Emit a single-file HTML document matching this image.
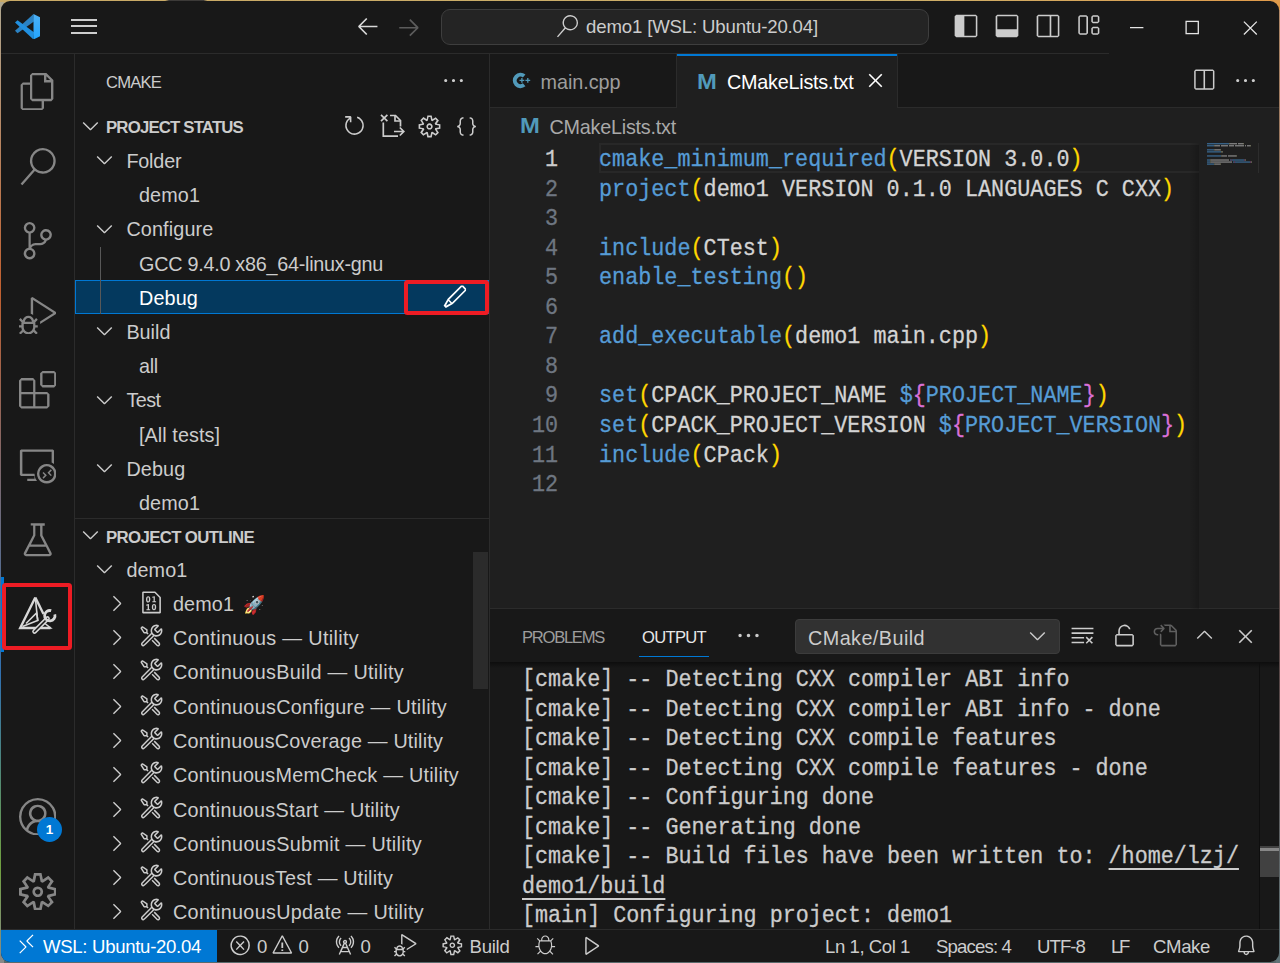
<!DOCTYPE html>
<html lang="en"><head><meta charset="utf-8"><title>demo1 [WSL: Ubuntu-20.04] - Visual Studio Code</title>
<style>
html,body{margin:0;padding:0}
body{width:1280px;height:963px;overflow:hidden;position:relative;background:#6b6a5c;font-family:"Liberation Sans", "DejaVu Sans", sans-serif;}
#desk{position:absolute;left:0;top:0;width:1280px;height:963px;background:linear-gradient(90deg,#c9aa66 0%,#c9aa66 12.9%,#3c3a38 13.2%,#3c3a38 15.9%,#c9aa66 16.2%,#cdb06a 70%,#d8a458 88%,#e09a4a 100%);}
#deskb{position:absolute;left:0;top:955px;width:1280px;height:8px;background:#5a6a6c}
#deskl{position:absolute;left:0;top:2px;width:4px;height:961px;background:linear-gradient(180deg,#b0a890,#c06030 30%,#3070b0 70%,#70a040 90%,#888)}
#deskr{position:absolute;left:1276px;top:10px;width:4px;height:953px;background:linear-gradient(180deg,#b08868,#705850 40%,#584848 70%,#607478)}
#win{position:absolute;left:1px;top:1px;width:1278px;height:960.9px;border-radius:9px;background:#181818;overflow:hidden;}
#o{position:absolute;left:-1px;top:-1px;width:1280px;height:963px}
.t{position:absolute;white-space:pre;}
.i{position:absolute;display:block}
.b{position:absolute;box-sizing:border-box}
.c{position:absolute;white-space:pre;font-family:"Liberation Mono", "DejaVu Sans Mono", monospace;transform-origin:0 50%;-webkit-text-stroke:0.3px}
</style></head>
<body>
<div id="desk"></div><div id="deskb"></div><div id="deskl"></div><div id="deskr"></div>
<div id="win"><div id="o">
<div class="b" style="left:490px;top:108px;width:790px;height:501px;background:#1f1f1f"></div>
<div class="b" style="left:1px;top:53px;width:1108px;height:1px;background:#2b2b2b"></div>
<div class="b" style="left:74px;top:54px;width:1px;height:875px;background:#2b2b2b"></div>
<div class="b" style="left:489px;top:54px;width:1px;height:875px;background:#2b2b2b"></div>
<div class="b" style="left:490px;top:107px;width:790px;height:1px;background:#2b2b2b"></div>
<div class="b" style="left:490px;top:608px;width:790px;height:1px;background:#2b2b2b"></div>
<div class="b" style="left:490px;top:609px;width:790px;height:320px;background:#181818"></div>
<div class="b" style="left:1px;top:929px;width:1279px;height:1px;background:#2b2b2b"></div>
<div class="b" style="left:1px;top:930px;width:216px;height:34px;background:#0078d4"></div>
<svg class="i" style="left:14.9px;top:13.7px" width="25.4" height="25.6" viewBox="0 0 100 100">
<defs><linearGradient id="lg1" x1="0" y1="0" x2="0" y2="1"><stop offset="0" stop-color="#4db0f5"/><stop offset="1" stop-color="#22a5ff"/></linearGradient></defs>
<polygon points="72.9,0 74.5,29 10,75.6 0,65.8" fill="#2b82c3"/>
<polygon points="72.9,100 74.5,71 10,24.4 0,33.3" fill="#2190e0"/>
<polygon points="72.9,0 100,13 100,86 72.9,100" fill="url(#lg1)"/>
</svg>
<div class="b" style="left:71px;top:19px;width:26.3px;height:2px;background:#cdcdcd"></div>
<div class="b" style="left:71px;top:25.2px;width:26.3px;height:2px;background:#cdcdcd"></div>
<div class="b" style="left:71px;top:31.7px;width:26.3px;height:2px;background:#cdcdcd"></div>
<svg class="i" style="left:354.7px;top:13.4px;" width="25.6" height="25.6" viewBox="0 0 16 16"><path fill="#d8d8d8" d="M6.99 3.09 2.03 8.11V8.8L6.99 13.81L7.73 13.07L3.57 8.96H14.03V7.95H3.57L7.73 3.79Z"/></svg>
<svg class="i" style="left:396px;top:13.5px;" width="25.6" height="25.6" viewBox="0 0 16 16"><path fill="#5c5c5c" d="M9.01 13.87 14.03 8.91V8.16L9.01 3.2L8.27 3.89L12.43 8.05H2.03V9.01H12.43L8.27 13.17Z"/></svg>
<div class="b" style="left:441px;top:9px;width:488px;height:36px;background:#242424;border:1px solid #3e3e3e;border-radius:9px"></div>
<svg class="i" style="left:556.1px;top:15px;" width="22.5" height="22.5" viewBox="0 0 16 16"><path fill="#cccccc" d="M10.19 0Q8.53 0 7.17 0.88Q5.81 1.76 5.15 3.25Q4.48 4.75 4.72 6.35Q4.96 7.95 6.03 9.12L0.69 15.25L1.44 15.89L6.77 9.81Q8.21 10.93 10 10.99Q11.79 11.04 13.28 10.03Q14.77 9.01 15.36 7.31Q15.95 5.6 15.41 3.87Q14.88 2.13 13.41 1.07Q11.95 0 10.19 0ZM10.19 9.97Q8.96 9.97 7.92 9.39Q6.88 8.8 6.27 7.76Q5.65 6.72 5.65 5.49Q5.65 4.27 6.27 3.23Q6.88 2.19 7.92 1.6Q8.96 1.01 10.19 1.01Q11.41 1.01 12.43 1.6Q13.44 2.19 14.05 3.23Q14.67 4.27 14.67 5.49Q14.67 6.72 14.05 7.76Q13.44 8.8 12.43 9.41Q11.41 10.03 10.19 10.03Z"/></svg>
<span class="t" style="left:586px;top:14.0px;line-height:26px;font-size:18.6px;color:#cccccc;letter-spacing:-0.146px;">demo1 [WSL: Ubuntu-20.04]</span>
<svg class="i" style="left:953px;top:12.6px;" width="26" height="26" viewBox="0 0 16 16"><path fill="#cccccc" d="M2.03 1.01 1.01 1.97V13.97L2.03 14.99H14.03L14.99 13.97V1.97L14.03 1.01ZM14.03 13.97H6.99V1.97H14.03Z"/></svg>
<svg class="i" style="left:993.8px;top:12.8px;" width="26" height="26" viewBox="0 0 16 16"><path fill="#cccccc" d="M2.03 1.01 1.01 1.97V13.97L2.03 14.99H14.03L14.99 13.97V1.97L14.03 1.01ZM2.03 9.97V1.97H14.03V9.97Z"/></svg>
<svg class="i" style="left:1034.5px;top:12.8px;" width="26" height="26" viewBox="0 0 16 16"><path fill="#cccccc" d="M2.03 1.01 1.01 2.03V14.03L2.03 14.99H14.03L14.99 14.03V2.03L14.03 1.01ZM2.03 14.03V2.03H9.01V14.03ZM10.03 14.03V2.03H14.03V14.03Z"/></svg>
<svg class="i" style="left:1074.5px;top:11.8px;" width="26" height="26" viewBox="0 0 16 16"><path fill="#cccccc" d="M2.99 1.97 2.03 2.99V13.01L2.99 13.97H6.99L8 13.01V2.99L6.99 1.97ZM2.99 13.01V2.99H6.99V13.01ZM10.03 2.99 10.99 1.97H14.03L14.99 2.99V5.97L14.03 6.99H10.99L10.03 5.97ZM10.99 2.99V5.97H14.03V2.99ZM10.03 9.97 10.99 9.01H14.03L14.99 9.97V13.01L14.03 13.97H10.99L10.03 13.01ZM10.99 9.97V13.01H14.03V9.97Z"/></svg>
<svg class="i" style="left:1120px;top:10px" width="150" height="36" viewBox="0 0 150 36" fill="none" stroke="#e4e4e4" stroke-width="1.3"><path d="M10 17.6 H23.4"/><rect x="66.1" y="11.4" width="12.2" height="12.2"/><path d="M123.9 11.6 L136.8 24.5 M136.8 11.6 L123.9 24.5"/></svg>
<svg class="i" style="left:18.75px;top:72.75px;" width="37.5" height="37.5" viewBox="0 0 16 16"><path fill="#868686" d="M11.68 0H5.65L4.69 1.01V4H1.65L0.69 5.01V15.04L1.65 16H9.71L10.67 15.04V12H13.81L14.67 11.04V2.99ZM11.68 1.39 13.28 2.99H11.68ZM9.65 14.99H1.65V5.01H4.69V11.04L5.65 12H9.65ZM13.65 10.99H5.65V1.01H10.67V4H13.65Z"/></svg>
<svg class="i" style="left:18.75px;top:148.33px;" width="37.5" height="37.5" viewBox="0 0 16 16"><path fill="#868686" d="M10.19 0Q8.53 0 7.17 0.88Q5.81 1.76 5.15 3.25Q4.48 4.75 4.72 6.35Q4.96 7.95 6.03 9.12L0.69 15.25L1.44 15.89L6.77 9.81Q8.21 10.93 10 10.99Q11.79 11.04 13.28 10.03Q14.77 9.01 15.36 7.31Q15.95 5.6 15.41 3.87Q14.88 2.13 13.41 1.07Q11.95 0 10.19 0ZM10.19 9.97Q8.96 9.97 7.92 9.39Q6.88 8.8 6.27 7.76Q5.65 6.72 5.65 5.49Q5.65 4.27 6.27 3.23Q6.88 2.19 7.92 1.6Q8.96 1.01 10.19 1.01Q11.41 1.01 12.43 1.6Q13.44 2.19 14.05 3.23Q14.67 4.27 14.67 5.49Q14.67 6.72 14.05 7.76Q13.44 8.8 12.43 9.41Q11.41 10.03 10.19 10.03Z"/></svg>
<svg class="i" style="left:18.75px;top:222.11px;" width="37.5" height="37.5" viewBox="0 0 16 16"><path fill="#868686" d="M14.03 5.49Q14.03 4.8 13.65 4.19Q13.28 3.57 12.64 3.25Q12 2.93 11.31 2.99Q10.61 3.04 10.03 3.47Q9.44 3.89 9.2 4.56Q8.96 5.23 9.07 5.92Q9.17 6.61 9.65 7.12Q10.13 7.63 10.83 7.84Q10.56 8.37 10.08 8.67Q9.6 8.96 9.01 8.96H7.04Q5.87 8.96 5.01 9.76V4.91Q5.97 4.75 6.53 3.97Q7.09 3.2 7.01 2.24Q6.93 1.28 6.21 0.64Q5.49 0 4.53 0Q3.57 0 2.85 0.64Q2.13 1.28 2.05 2.24Q1.97 3.2 2.53 3.97Q3.09 4.75 4.05 4.91V10.99Q3.09 11.2 2.51 11.95Q1.92 12.69 2 13.65Q2.08 14.61 2.75 15.28Q3.41 15.95 4.37 16Q5.33 16.05 6.08 15.47Q6.83 14.88 6.99 13.92Q7.15 12.96 6.67 12.16Q6.19 11.36 5.23 11.09Q5.49 10.56 5.97 10.27Q6.45 9.97 7.04 9.97H9.01Q9.97 9.97 10.75 9.41Q11.52 8.85 11.84 7.95Q12.75 7.84 13.39 7.12Q14.03 6.4 14.03 5.49ZM3.04 2.51Q3.04 1.87 3.47 1.44Q3.89 1.01 4.53 1.01Q5.17 1.01 5.6 1.44Q6.03 1.87 6.03 2.48Q6.03 3.09 5.6 3.55Q5.17 4 4.53 4Q3.89 4 3.47 3.55Q3.04 3.09 3.04 2.51ZM6.03 13.44Q6.03 14.08 5.6 14.51Q5.17 14.93 4.53 14.93Q3.89 14.93 3.47 14.51Q3.04 14.08 3.04 13.47Q3.04 12.85 3.47 12.4Q3.89 11.95 4.53 11.95Q5.17 11.95 5.6 12.4Q6.03 12.85 6.03 13.44ZM11.52 6.99Q10.88 6.99 10.45 6.53Q10.03 6.08 10.03 5.47Q10.03 4.85 10.45 4.43Q10.88 4 11.49 4Q12.11 4 12.56 4.43Q13.01 4.85 13.01 5.47Q13.01 6.08 12.56 6.53Q12.11 6.99 11.52 6.99Z"/></svg>
<svg class="i" style="left:18.75px;top:296.79px;" width="37.5" height="37.5" viewBox="0 0 16 16"><path fill="#868686" d="M7.31 9.01 6.4 9.87Q6.19 9.07 5.52 8.53Q4.85 8 4 8Q3.15 8 2.48 8.53Q1.81 9.07 1.6 9.87L0.69 9.01L0 9.71L1.17 10.83L1.01 10.99V12H0V13.01H1.01V13.07Q1.07 13.55 1.28 14.03L0 15.31L0.69 16L1.81 14.88Q2.19 15.41 2.77 15.71Q3.36 16 4 16Q4.64 16 5.23 15.71Q5.81 15.41 6.19 14.88L7.31 16L8 15.31L6.72 13.97Q6.93 13.55 6.99 13.01V12.96H8V12H6.99V10.99L6.88 10.83L8 9.71ZM4 9.01Q4.64 9.01 5.07 9.44Q5.49 9.87 5.49 10.51H2.51Q2.51 9.87 2.93 9.44Q3.36 9.01 4 9.01ZM6.03 13.01Q5.92 13.81 5.36 14.37Q4.8 14.93 4 14.99Q3.2 14.93 2.64 14.37Q2.08 13.81 2.03 13.01V11.52H6.03ZM15.84 6.4V7.25L9.01 11.57V10.4L14.67 6.83L6.03 1.33V7.63Q5.55 7.31 5.01 7.15V0.43L5.76 0Z"/></svg>
<svg class="i" style="left:18.75px;top:371.47px;" width="37.5" height="37.5" viewBox="0 0 16 16"><path fill="#868686" d="M9.01 1.01 10.03 0H14.99L16 1.01V5.97L14.99 6.99H10.03L9.01 5.97ZM10.03 1.01V5.97H14.99V1.01ZM0 9.97V4L1.01 2.99H6.03L6.99 4V9.01H12L13.01 9.97V14.99L12 16H1.01L0 14.99ZM6.03 9.01V4H1.01V9.01ZM6.03 9.97H1.01V14.99H6.03ZM6.99 14.99H12V9.97H6.99Z"/></svg>
<svg class="i" style="left:18.75px;top:446.15000000000003px;" width="37.5" height="37.5" viewBox="0 0 16 16"><path fill="#868686" d="M0.91 1.44H14.45L14.93 1.92V7.68Q14.45 7.31 13.92 7.04V2.45H1.44V11.84H6.61Q6.61 13.55 7.68 14.93H3.52V13.92H6.61V12.85H0.91L0.37 12.37V1.92ZM11.84 7.68Q10.72 7.68 9.76 8.24Q8.8 8.8 8.24 9.76Q7.68 10.72 7.68 11.84Q7.68 12.96 8.24 13.92Q8.8 14.88 9.76 15.44Q10.72 16 11.84 16Q12.96 16 13.92 15.44Q14.88 14.88 15.44 13.92Q16 12.96 16 11.84Q16 10.72 15.44 9.76Q14.88 8.8 13.92 8.24Q12.96 7.68 11.84 7.68ZM11.84 14.93Q10.99 14.93 10.27 14.53Q9.55 14.13 9.12 13.41Q8.69 12.69 8.69 11.84Q8.69 10.99 9.12 10.27Q9.55 9.55 10.27 9.12Q10.99 8.69 11.84 8.69Q12.69 8.69 13.41 9.12Q14.13 9.55 14.53 10.27Q14.93 10.99 14.93 11.84Q14.93 12.69 14.53 13.41Q14.13 14.13 13.41 14.53Q12.69 14.93 11.84 14.93ZM13.55 12.85 12.16 11.41 13.55 9.97 14.03 10.45 13.01 11.41 14.03 12.43ZM10.03 11.52 10.99 12.48 10.03 13.49 10.45 13.92 11.89 12.48 10.45 11.04Z"/></svg>
<svg class="i" style="left:18.75px;top:520.83px;" width="37.5" height="37.5" viewBox="0 0 16 16"><path fill="#868686" d="M13.87 13.55 10.03 6.03V2.03H10.99V1.01H5.01V1.97H6.03V5.97L2.08 13.55Q1.87 14.08 2.16 14.53Q2.45 14.99 2.99 14.99H13.01Q13.55 14.99 13.84 14.53Q14.13 14.08 13.87 13.55ZM6.88 6.4 6.99 6.19V2.03H9.01V6.24L10.93 10.03H5.07ZM2.99 14.03 4.53 10.99H11.47L13.01 14.03Z"/></svg>
<svg class="i" style="left:18.75px;top:797.75px;" width="37.5" height="37.5" viewBox="0 0 16 16"><path fill="#868686" d="M16 8Q16 5.81 14.93 3.97Q13.87 2.13 12.03 1.07Q10.19 0 8 0Q5.81 0 3.97 1.07Q2.13 2.13 1.07 3.97Q0 5.81 0 8Q0 9.76 0.75 11.36Q1.49 12.96 2.83 14.08L3.52 14.61Q5.55 16 8 16Q10.45 16 12.48 14.61L13.23 14.08Q14.51 12.96 15.25 11.36Q16 9.76 16 8ZM8 14.99Q5.81 14.99 4 13.71L4.05 13.33Q4.21 12.8 4.48 12.35Q4.75 11.89 5.12 11.52Q5.49 11.15 5.92 10.88Q6.35 10.61 6.91 10.48Q7.47 10.35 8 10.35Q8.8 10.35 9.57 10.64Q10.35 10.93 10.91 11.49Q11.47 12.05 11.79 12.8Q11.95 13.23 12.05 13.71Q10.24 14.99 8 14.99ZM5.55 7.57Q5.33 7.09 5.33 6.56Q5.33 6.03 5.55 5.55Q5.76 5.07 6.11 4.72Q6.45 4.37 6.93 4.13Q7.41 3.89 8 3.89Q8.59 3.89 9.04 4.11Q9.49 4.32 9.87 4.69Q10.24 5.07 10.45 5.55Q10.67 6.03 10.67 6.59Q10.67 7.15 10.45 7.6Q10.24 8.05 9.87 8.43Q9.49 8.8 9.01 9.01Q8 9.44 6.93 9.01Q6.51 8.8 6.13 8.43Q5.76 8.05 5.55 7.57ZM12.96 12.91Q12.96 12.91 12.96 12.85V12.8Q12.75 12.05 12.29 11.41Q11.84 10.77 11.2 10.29Q10.72 9.92 10.13 9.65Q10.4 9.49 10.61 9.28Q10.99 8.91 11.25 8.48Q11.79 7.63 11.73 6.56Q11.79 5.81 11.49 5.12Q11.2 4.43 10.67 3.89Q10.13 3.36 9.44 3.09Q8.75 2.83 7.97 2.83Q7.2 2.83 6.51 3.09Q5.81 3.36 5.31 3.89Q4.8 4.43 4.51 5.12Q4.21 5.81 4.21 6.56Q4.21 7.09 4.37 7.6Q4.53 8.11 4.75 8.48Q4.96 8.85 5.39 9.28Q5.6 9.49 5.87 9.71Q5.33 9.92 4.85 10.29Q4.21 10.77 3.76 11.41Q3.31 12.05 3.04 12.85V12.91Q2.08 11.95 1.55 10.67Q1.01 9.39 1.01 8Q1.01 6.08 1.95 4.48Q2.88 2.88 4.48 1.95Q6.08 1.01 8 1.01Q9.92 1.01 11.52 1.95Q13.12 2.88 14.05 4.48Q14.99 6.08 14.99 8Q14.99 9.39 14.48 10.67Q13.97 11.95 12.96 12.91Z"/></svg>
<svg class="i" style="left:18.75px;top:872.75px;" width="37.5" height="37.5" viewBox="0 0 16 16"><path fill="#868686" d="M13.23 5.81 16 6.4V9.6L13.23 10.19L14.83 12.53L12.53 14.77L10.19 13.23L9.6 16H6.4L5.81 13.23L3.47 14.83L1.23 12.53L2.77 10.19L0 9.6V6.4L2.77 5.81L1.23 3.47L3.47 1.17L5.81 2.77L6.4 0H9.6L10.19 2.77L12.53 1.17L14.83 3.47ZM12.21 9.23 14.88 8.69V7.36L12.21 6.77L11.84 5.92L13.33 3.63L12.43 2.67L10.13 4.21L9.23 3.84L8.69 1.17H7.36L6.83 3.84L5.97 4.21L3.68 2.67L2.72 3.63L4.27 5.92L3.89 6.77L1.23 7.36V8.69L3.89 9.23L4.27 10.08L2.72 12.37L3.68 13.33L5.97 11.79L6.83 12.16L7.36 14.83H8.69L9.23 12.16L10.13 11.79L12.43 13.33L13.33 12.37L11.84 10.08ZM6.72 6.08Q7.31 5.71 8 5.71Q8.96 5.71 9.63 6.37Q10.29 7.04 10.29 8Q10.29 8.8 9.76 9.44Q9.23 10.08 8.43 10.24Q7.63 10.4 6.91 10.03Q6.19 9.65 5.89 8.88Q5.6 8.11 5.81 7.33Q6.03 6.56 6.72 6.08ZM7.36 8.96Q7.68 9.12 8 9.12Q8.48 9.12 8.8 8.8Q9.12 8.48 9.12 8.03Q9.12 7.57 8.88 7.28Q8.64 6.99 8.24 6.91Q7.84 6.83 7.47 7.01Q7.09 7.2 6.93 7.57Q6.77 7.95 6.91 8.35Q7.04 8.75 7.36 8.96Z"/></svg>
<div class="b" style="left:37px;top:817.3px;width:25px;height:25px;background:#0078d4;border-radius:50%"></div>
<span class="t" style="left:45.7px;top:820.4px;line-height:19px;font-size:13.5px;color:#ffffff;font-weight:700;">1</span>
<div class="b" style="left:1px;top:577px;width:3px;height:74.7px;background:#0078d4"></div>
<svg class="i" style="left:14px;top:590px" width="48" height="48" viewBox="0 0 48 48" fill="none" stroke="#d7d7d7" stroke-width="2.4" stroke-linejoin="miter">
<path d="M21.3 7.5 L6.2 38 L36.5 38"/>
<path d="M21.3 7.5 L29.5 24"/>
<path d="M21.5 9 L23.6 30.5 L8.5 36.5" stroke-width="1.6"/>
<path d="M12 33.5 L22.6 23 L24 31" stroke-width="1.6"/>
<path d="M31 33.5 L36.5 38 L29 38" stroke-width="1.6"/>
<path d="M20.5 41.5 L33.5 28.5" stroke-width="4.6" stroke-linecap="round"/>
<path d="M20.5 41.5 L33.5 28.5" stroke="#181818" stroke-width="1.6" stroke-linecap="round"/>
<path d="M40.8 24.3 A5.2 5.2 0 1 1 37.2 20.7" stroke-width="2.8"/>
</svg>
<div class="b" style="left:1.5px;top:583.1px;width:70.8px;height:67.1px;border:4.2px solid #ed1c24;border-radius:3.5px"></div>
<span class="t" style="left:106px;top:70.5px;line-height:23px;font-size:16.6px;color:#cccccc;letter-spacing:-0.803px;">CMAKE</span>
<svg class="i" style="left:440.5px;top:68px;" width="25" height="25" viewBox="0 0 16 16"><path fill="#cccccc" d="M4 8Q4 8.43 3.71 8.72Q3.41 9.01 2.99 9.01Q2.56 9.01 2.29 8.72Q2.03 8.43 2.03 8Q2.03 7.57 2.29 7.28Q2.56 6.99 2.99 6.99Q3.41 6.99 3.71 7.28Q4 7.57 4 8ZM9.01 8Q9.01 8.43 8.72 8.72Q8.43 9.01 8 9.01Q7.57 9.01 7.28 8.72Q6.99 8.43 6.99 8Q6.99 7.57 7.28 7.28Q7.57 6.99 8 6.99Q8.43 6.99 8.72 7.28Q9.01 7.57 9.01 8ZM14.03 8Q14.03 8.43 13.73 8.72Q13.44 9.01 13.01 9.01Q12.59 9.01 12.29 8.72Q12 8.43 12 8Q12 7.57 12.29 7.28Q12.59 6.99 13.01 6.99Q13.44 6.99 13.73 7.28Q14.03 7.57 14.03 8Z"/></svg>
<svg class="i" style="left:78px;top:112.5px;" width="25" height="25" viewBox="0 0 16 16"><path fill="#cccccc" d="M8 10.08 12.32 5.71 12.96 6.35 8.27 10.99H7.68L2.99 6.35L3.63 5.71Z"/></svg>
<span class="t" style="left:106px;top:115.5px;line-height:24px;font-size:16.8px;color:#cccccc;font-weight:700;letter-spacing:-0.826px;">PROJECT STATUS</span>
<svg class="i" style="left:342.2px;top:112.6px;" width="25" height="25" viewBox="0 0 16 16"><path fill="#cccccc" d="M4.69 2.99H2.03V1.97H5.49L6.03 2.51V5.97H5.01V4Q3.63 5.01 3.17 6.69Q2.72 8.37 3.41 9.97Q4.11 11.57 5.63 12.4Q7.15 13.23 8.85 12.93Q10.56 12.64 11.71 11.36Q12.85 10.08 12.99 8.35Q13.12 6.61 12.16 5.2Q11.2 3.79 9.55 3.25L9.81 2.29Q11.15 2.72 12.13 3.65Q13.12 4.59 13.6 5.87Q14.08 7.15 13.97 8.51Q13.87 9.87 13.17 11.04Q12.48 12.21 11.33 12.99Q10.19 13.76 8.83 13.95Q7.47 14.13 6.16 13.71Q4.85 13.28 3.87 12.35Q2.88 11.41 2.4 10.13Q1.92 8.85 2.03 7.49Q2.13 6.13 2.83 4.96Q3.52 3.79 4.69 2.99Z"/></svg>
<svg class="i" style="left:417.1px;top:113.9px;" width="25" height="25" viewBox="0 0 16 16"><path fill="#cccccc" d="M9.12 4.37 8.59 1.97H7.41L6.88 4.37L6.19 4.69L4.21 3.41L3.31 4.21L4.59 6.19L4.43 6.88L2.03 7.41V8.59L4.43 9.12L4.69 9.92L3.41 11.89L4.21 12.69L6.19 11.41L6.99 11.68L7.41 13.97H8.59L9.12 11.57L9.92 11.31L11.89 12.59L12.69 11.79L11.41 9.81L11.68 9.01L14.03 8.59V7.41L11.63 6.88L11.31 6.08L12.59 4.11L11.79 3.31L9.81 4.59ZM9.39 1.01 9.92 3.41 12 2.08 14.03 4.11 12.59 6.19 14.99 6.61V9.39L12.59 9.92L14.03 12L12 13.97L9.92 12.59L9.39 14.99H6.61L6.08 12.59L4 13.92L2.03 11.89L3.41 9.81L1.01 9.39V6.61L3.41 6.08L2.08 4L4.11 1.97L6.19 3.41L6.61 1.01ZM10.03 8Q10.03 8.8 9.41 9.39Q8.8 9.97 8 9.97Q7.2 9.97 6.61 9.39Q6.03 8.8 6.03 8Q6.03 7.2 6.61 6.59Q7.2 5.97 8 5.97Q8.8 5.97 9.41 6.59Q10.03 7.2 10.03 8ZM8 9.01Q8.43 9.01 8.72 8.72Q9.01 8.43 9.01 8Q9.01 7.57 8.72 7.28Q8.43 6.99 8 6.99Q7.57 6.99 7.28 7.28Q6.99 7.57 6.99 8Q6.99 8.43 7.28 8.72Q7.57 9.01 8 9.01Z"/></svg>
<svg class="i" style="left:453.5px;top:114px;" width="25" height="25" viewBox="0 0 16 16"><path fill="#cccccc" d="M6.03 2.99V1.97H5.92Q5.44 1.97 4.99 2.16Q4.53 2.35 4.21 2.69Q3.89 3.04 3.73 3.47Q3.57 3.89 3.52 4.32Q3.47 4.75 3.52 5.17V6.03Q3.52 6.35 3.41 6.61Q3.2 7.15 2.67 7.41Q2.4 7.52 2.08 7.52H2.03V8.48H2.08Q2.4 8.48 2.67 8.59V8.64Q2.93 8.75 3.09 8.91V8.96Q3.31 9.12 3.41 9.39Q3.52 9.65 3.52 9.97V10.83Q3.47 11.25 3.52 11.68V11.73Q3.57 12.11 3.73 12.53Q3.89 12.96 4.24 13.31Q4.59 13.65 5.01 13.81Q5.44 13.97 5.92 14.03H6.03V13.01H5.92Q5.6 13.01 5.33 12.91Q5.07 12.8 4.88 12.59Q4.69 12.37 4.59 12.11Q4.48 11.84 4.48 11.52V10.19Q4.48 9.87 4.43 9.55Q4.37 9.23 4.27 8.96Q4 8.37 3.52 8Q4 7.63 4.27 7.04Q4.37 6.77 4.43 6.45Q4.48 6.13 4.48 5.81V4.48Q4.48 4 4.72 3.65Q4.96 3.31 5.33 3.09Q5.6 2.99 5.92 2.99ZM10.03 13.01V13.97H10.08Q10.56 13.97 10.99 13.81Q11.41 13.65 11.76 13.31Q12.11 12.96 12.27 12.53Q12.43 12.16 12.48 11.68Q12.53 11.25 12.48 10.83V9.97Q12.48 9.65 12.59 9.39Q12.8 8.85 13.33 8.59Q13.6 8.48 13.92 8.48H14.03V7.52H13.92Q13.6 7.52 13.33 7.41V7.36Q13.07 7.25 12.91 7.09V7.04Q12.69 6.88 12.59 6.61Q12.48 6.35 12.48 6.03V5.17Q12.53 4.75 12.48 4.32V4.27Q12.43 3.89 12.27 3.47Q12.11 3.04 11.76 2.69Q11.41 2.35 10.99 2.16Q10.56 1.97 10.08 2.03H10.03V2.99H10.08Q10.4 2.99 10.67 3.09Q10.93 3.2 11.12 3.41Q11.31 3.63 11.41 3.89Q11.52 4.16 11.52 4.48V5.81Q11.52 6.13 11.57 6.45Q11.63 6.77 11.73 7.04Q12 7.63 12.48 8Q12 8.37 11.73 8.96Q11.63 9.23 11.57 9.55Q11.52 9.87 11.52 10.19V11.52Q11.52 12 11.28 12.35Q11.04 12.69 10.67 12.91Q10.4 13.01 10.08 13.01Z"/></svg>
<svg class="i" style="left:377.8px;top:112.4px" width="28" height="28" viewBox="0 0 28 28" fill="none" stroke="#cccccc" stroke-width="1.7">
<path d="M3 2.8 L9.4 9.2 M9.4 2.8 L3 9.2"/>
<path d="M12 3.5 H17.5 L22.5 8.5 V14.5"/>
<path d="M17 3.8 V9 H22.3"/>
<path d="M5.3 10.5 V24.2 H20"/>
<path d="M16 19.5 H25.5 M21.8 15.5 L25.8 19.5 L21.8 23.5"/>
</svg>
<div class="b" style="left:75px;top:280px;width:414px;height:34px;background:#04395e;border:1px solid #0078d4"></div>
<div class="b" style="left:100px;top:247px;width:1px;height:66.5px;background:#585858"></div>
<svg class="i" style="left:92px;top:147.15px;" width="25" height="25" viewBox="0 0 16 16"><path fill="#cccccc" d="M8 10.08 12.32 5.71 12.96 6.35 8.27 10.99H7.68L2.99 6.35L3.63 5.71Z"/></svg>
<span class="t" style="left:126.4px;top:147.0px;line-height:28px;font-size:19.8px;color:#cccccc;letter-spacing:-0.180px;">Folder</span>
<span class="t" style="left:139px;top:181.2px;line-height:28px;font-size:19.8px;color:#cccccc;letter-spacing:0.103px;">demo1</span>
<svg class="i" style="left:92px;top:215.55px;" width="25" height="25" viewBox="0 0 16 16"><path fill="#cccccc" d="M8 10.08 12.32 5.71 12.96 6.35 8.27 10.99H7.68L2.99 6.35L3.63 5.71Z"/></svg>
<span class="t" style="left:126.4px;top:215.4px;line-height:28px;font-size:19.8px;color:#cccccc;letter-spacing:0.135px;">Configure</span>
<span class="t" style="left:139px;top:249.6px;line-height:28px;font-size:19.8px;color:#cccccc;letter-spacing:-0.258px;">GCC 9.4.0 x86_64-linux-gnu</span>
<span class="t" style="left:139px;top:283.8px;line-height:28px;font-size:19.8px;color:#ffffff;letter-spacing:0.141px;">Debug</span>
<svg class="i" style="left:92px;top:318.15px;" width="25" height="25" viewBox="0 0 16 16"><path fill="#cccccc" d="M8 10.08 12.32 5.71 12.96 6.35 8.27 10.99H7.68L2.99 6.35L3.63 5.71Z"/></svg>
<span class="t" style="left:126.4px;top:318.0px;line-height:28px;font-size:19.8px;color:#cccccc;letter-spacing:0.000px;">Build</span>
<span class="t" style="left:139px;top:352.2px;line-height:28px;font-size:19.8px;color:#cccccc;letter-spacing:-0.266px;">all</span>
<svg class="i" style="left:92px;top:386.55px;" width="25" height="25" viewBox="0 0 16 16"><path fill="#cccccc" d="M8 10.08 12.32 5.71 12.96 6.35 8.27 10.99H7.68L2.99 6.35L3.63 5.71Z"/></svg>
<span class="t" style="left:126.4px;top:386.4px;line-height:28px;font-size:19.8px;color:#cccccc;letter-spacing:-0.570px;">Test</span>
<span class="t" style="left:139px;top:420.6px;line-height:28px;font-size:19.8px;color:#cccccc;letter-spacing:0.068px;">[All tests]</span>
<svg class="i" style="left:92px;top:454.95px;" width="25" height="25" viewBox="0 0 16 16"><path fill="#cccccc" d="M8 10.08 12.32 5.71 12.96 6.35 8.27 10.99H7.68L2.99 6.35L3.63 5.71Z"/></svg>
<span class="t" style="left:126.4px;top:454.8px;line-height:28px;font-size:19.8px;color:#cccccc;letter-spacing:0.141px;">Debug</span>
<span class="t" style="left:139px;top:489.0px;line-height:28px;font-size:19.8px;color:#cccccc;letter-spacing:0.103px;">demo1</span>
<svg class="i" style="left:442.1px;top:283.6px;" width="25.7" height="25.7" viewBox="0 0 16 16"><path fill="#ffffff" d="M13.23 1.01H11.79L3.52 9.23L3.36 9.49L1.01 13.6L2.4 14.99L6.51 12.64L6.77 12.48L14.99 4.21V2.77ZM2.4 13.6 3.95 10.61 5.39 12.05ZM6.24 11.52 4.48 9.76 12.48 1.76 14.24 3.52Z"/></svg>
<div class="b" style="left:404.2px;top:279.9px;width:85px;height:35.4px;border:4.2px solid #ed1c24;border-radius:3.5px"></div>
<div class="b" style="left:75px;top:518px;width:414px;height:1px;background:#2b2b2b"></div>
<svg class="i" style="left:78px;top:521.6px;" width="25" height="25" viewBox="0 0 16 16"><path fill="#cccccc" d="M8 10.08 12.32 5.71 12.96 6.35 8.27 10.99H7.68L2.99 6.35L3.63 5.71Z"/></svg>
<span class="t" style="left:106px;top:525.6px;line-height:24px;font-size:16.8px;color:#cccccc;font-weight:700;letter-spacing:-0.639px;">PROJECT OUTLINE</span>
<div class="b" style="left:473px;top:552px;width:14.6px;height:137px;background:#2b2b2b"></div>
<svg class="i" style="left:92px;top:556px;" width="25" height="25" viewBox="0 0 16 16"><path fill="#cccccc" d="M8 10.08 12.32 5.71 12.96 6.35 8.27 10.99H7.68L2.99 6.35L3.63 5.71Z"/></svg>
<span class="t" style="left:126.4px;top:556.0px;line-height:28px;font-size:19.8px;color:#cccccc;letter-spacing:0.103px;">demo1</span>
<svg class="i" style="left:104px;top:590.9px;" width="25" height="25" viewBox="0 0 16 16"><path fill="#cccccc" d="M10.08 8 5.71 3.68 6.35 3.04 10.99 7.73V8.32L6.35 13.01L5.71 12.37Z"/></svg>
<svg class="i" style="left:138.5px;top:589.8px;" width="25" height="25" viewBox="0 0 16 16"><path fill="#cccccc" d="M10.56 1.12 13.87 4.43 14.03 4.8V14.51L13.49 14.99H2.51L2.03 14.51V1.49L2.51 1.01H10.24ZM2.99 1.97V13.97H13.01V5.01L10.03 1.97ZM4.48 6.03Q4.48 8 5.81 8Q6.51 8 6.88 7.47Q7.25 6.93 7.25 5.97Q7.25 4 5.92 4Q5.23 4 4.85 4.53Q4.48 5.07 4.48 6.03ZM5.33 6.03Q5.33 4.64 5.87 4.64Q6.4 4.64 6.4 5.97Q6.4 7.31 5.87 7.31Q5.33 7.31 5.33 6.03ZM8.53 7.89H10.93V7.25H10.13V4L8.48 4.32V5.01L9.33 4.85V7.25H8.53ZM7.15 12.91H4.75V12.27H5.55V9.87L4.69 10.03V9.33L6.4 9.01V12.27H7.15ZM8.21 10.99Q8.21 12.91 9.6 12.91Q10.29 12.91 10.64 12.4Q10.99 11.89 10.99 10.88Q10.99 8.91 9.65 8.91Q8.96 8.91 8.59 9.44Q8.21 9.97 8.21 10.99ZM9.07 10.99Q9.07 9.6 9.6 9.6Q10.13 9.6 10.13 10.93Q10.13 12.27 9.6 12.27Q9.07 12.27 9.07 10.99Z"/></svg>
<span class="t" style="left:173px;top:590.0px;line-height:28px;font-size:19.8px;color:#cccccc;letter-spacing:0.103px;">demo1</span>
<span class="t" style="left:243.6px;top:591.5px;line-height:25px;font-size:18px;color:#cccccc;font-family:'Noto Color Emoji','Liberation Sans',sans-serif;">🚀</span>
<svg class="i" style="left:104px;top:624.5px;" width="25" height="25" viewBox="0 0 16 16"><path fill="#cccccc" d="M10.08 8 5.71 3.68 6.35 3.04 10.99 7.73V8.32L6.35 13.01L5.71 12.37Z"/></svg>
<svg class="i" style="left:138.5px;top:623.1px;" width="25" height="25" viewBox="0 0 16 16"><path fill="#cccccc" d="M14.77 3.47 13.97 3.31 11.89 5.39 10.67 4.16 12.75 2.03 12.59 1.23Q11.89 1.01 11.17 1.01Q10.45 1.01 9.76 1.31Q9.07 1.6 8.53 2.13Q8 2.67 7.71 3.39Q7.41 4.11 7.41 4.88Q7.41 5.65 7.68 6.35Q4.59 9.44 1.55 12.59Q1.23 13.01 1.25 13.57Q1.28 14.13 1.71 14.51Q1.92 14.72 2.16 14.85Q2.4 14.99 2.67 14.99Q3.15 14.99 3.52 14.61Q4.64 13.6 6.56 11.63Q8.37 9.87 9.76 8.43Q10.45 8.75 11.2 8.75Q11.95 8.75 12.64 8.45Q13.33 8.16 13.87 7.6Q14.4 7.04 14.69 6.35Q14.99 5.65 14.99 4.91Q14.99 4.16 14.77 3.47ZM2.93 13.92Q2.88 13.97 2.77 13.97H2.67Q2.56 13.97 2.51 13.95Q2.45 13.92 2.37 13.81Q2.29 13.71 2.24 13.55Q2.19 13.39 2.24 13.28Q4.48 10.93 8.21 7.2Q8.37 7.41 8.53 7.6Q8.69 7.79 8.91 7.95Q5.01 11.95 2.93 13.92ZM14.03 4.85Q14.08 6.08 13.23 6.91Q12.37 7.73 11.2 7.73Q10.03 7.73 9.23 6.93Q8.59 6.29 8.43 5.44Q8.27 4.59 8.59 3.79Q8.8 3.25 9.2 2.83Q9.6 2.4 10.13 2.19Q10.67 1.97 11.2 1.97H11.47L9.65 3.84V4.53L11.52 6.4H12.21L14.03 4.59ZM3.25 6.67H4.75L5.49 7.41L6.13 6.72L5.49 6.03L5.55 4.37L5.33 3.95L2.45 2.03L1.87 2.13L1.07 2.93L0.96 3.57L2.83 6.45ZM2.29 3.04 4.59 4.59V5.71H3.52L2.03 3.36ZM9.39 10.03 10.08 9.33 13.17 12.53Q13.6 12.96 13.6 13.55Q13.6 14.13 13.17 14.56Q12.85 14.88 12.45 14.96Q12.05 15.04 11.63 14.88Q11.36 14.77 11.2 14.56L8.05 11.36L8.75 10.67L11.84 13.87Q11.95 13.97 12.08 14.03Q12.21 14.08 12.35 14.03Q12.48 13.97 12.53 13.89Q12.59 13.81 12.61 13.73Q12.64 13.65 12.64 13.55Q12.64 13.44 12.61 13.36Q12.59 13.28 12.53 13.23Z"/></svg>
<span class="t" style="left:173px;top:624.0px;line-height:28px;font-size:19.8px;color:#cccccc;letter-spacing:0.340px;">Continuous — Utility</span>
<svg class="i" style="left:104px;top:658.5px;" width="25" height="25" viewBox="0 0 16 16"><path fill="#cccccc" d="M10.08 8 5.71 3.68 6.35 3.04 10.99 7.73V8.32L6.35 13.01L5.71 12.37Z"/></svg>
<svg class="i" style="left:138.5px;top:657.1px;" width="25" height="25" viewBox="0 0 16 16"><path fill="#cccccc" d="M14.77 3.47 13.97 3.31 11.89 5.39 10.67 4.16 12.75 2.03 12.59 1.23Q11.89 1.01 11.17 1.01Q10.45 1.01 9.76 1.31Q9.07 1.6 8.53 2.13Q8 2.67 7.71 3.39Q7.41 4.11 7.41 4.88Q7.41 5.65 7.68 6.35Q4.59 9.44 1.55 12.59Q1.23 13.01 1.25 13.57Q1.28 14.13 1.71 14.51Q1.92 14.72 2.16 14.85Q2.4 14.99 2.67 14.99Q3.15 14.99 3.52 14.61Q4.64 13.6 6.56 11.63Q8.37 9.87 9.76 8.43Q10.45 8.75 11.2 8.75Q11.95 8.75 12.64 8.45Q13.33 8.16 13.87 7.6Q14.4 7.04 14.69 6.35Q14.99 5.65 14.99 4.91Q14.99 4.16 14.77 3.47ZM2.93 13.92Q2.88 13.97 2.77 13.97H2.67Q2.56 13.97 2.51 13.95Q2.45 13.92 2.37 13.81Q2.29 13.71 2.24 13.55Q2.19 13.39 2.24 13.28Q4.48 10.93 8.21 7.2Q8.37 7.41 8.53 7.6Q8.69 7.79 8.91 7.95Q5.01 11.95 2.93 13.92ZM14.03 4.85Q14.08 6.08 13.23 6.91Q12.37 7.73 11.2 7.73Q10.03 7.73 9.23 6.93Q8.59 6.29 8.43 5.44Q8.27 4.59 8.59 3.79Q8.8 3.25 9.2 2.83Q9.6 2.4 10.13 2.19Q10.67 1.97 11.2 1.97H11.47L9.65 3.84V4.53L11.52 6.4H12.21L14.03 4.59ZM3.25 6.67H4.75L5.49 7.41L6.13 6.72L5.49 6.03L5.55 4.37L5.33 3.95L2.45 2.03L1.87 2.13L1.07 2.93L0.96 3.57L2.83 6.45ZM2.29 3.04 4.59 4.59V5.71H3.52L2.03 3.36ZM9.39 10.03 10.08 9.33 13.17 12.53Q13.6 12.96 13.6 13.55Q13.6 14.13 13.17 14.56Q12.85 14.88 12.45 14.96Q12.05 15.04 11.63 14.88Q11.36 14.77 11.2 14.56L8.05 11.36L8.75 10.67L11.84 13.87Q11.95 13.97 12.08 14.03Q12.21 14.08 12.35 14.03Q12.48 13.97 12.53 13.89Q12.59 13.81 12.61 13.73Q12.64 13.65 12.64 13.55Q12.64 13.44 12.61 13.36Q12.59 13.28 12.53 13.23Z"/></svg>
<span class="t" style="left:173px;top:658.0px;line-height:28px;font-size:19.8px;color:#cccccc;letter-spacing:0.312px;">ContinuousBuild — Utility</span>
<svg class="i" style="left:104px;top:693.5px;" width="25" height="25" viewBox="0 0 16 16"><path fill="#cccccc" d="M10.08 8 5.71 3.68 6.35 3.04 10.99 7.73V8.32L6.35 13.01L5.71 12.37Z"/></svg>
<svg class="i" style="left:138.5px;top:692.1px;" width="25" height="25" viewBox="0 0 16 16"><path fill="#cccccc" d="M14.77 3.47 13.97 3.31 11.89 5.39 10.67 4.16 12.75 2.03 12.59 1.23Q11.89 1.01 11.17 1.01Q10.45 1.01 9.76 1.31Q9.07 1.6 8.53 2.13Q8 2.67 7.71 3.39Q7.41 4.11 7.41 4.88Q7.41 5.65 7.68 6.35Q4.59 9.44 1.55 12.59Q1.23 13.01 1.25 13.57Q1.28 14.13 1.71 14.51Q1.92 14.72 2.16 14.85Q2.4 14.99 2.67 14.99Q3.15 14.99 3.52 14.61Q4.64 13.6 6.56 11.63Q8.37 9.87 9.76 8.43Q10.45 8.75 11.2 8.75Q11.95 8.75 12.64 8.45Q13.33 8.16 13.87 7.6Q14.4 7.04 14.69 6.35Q14.99 5.65 14.99 4.91Q14.99 4.16 14.77 3.47ZM2.93 13.92Q2.88 13.97 2.77 13.97H2.67Q2.56 13.97 2.51 13.95Q2.45 13.92 2.37 13.81Q2.29 13.71 2.24 13.55Q2.19 13.39 2.24 13.28Q4.48 10.93 8.21 7.2Q8.37 7.41 8.53 7.6Q8.69 7.79 8.91 7.95Q5.01 11.95 2.93 13.92ZM14.03 4.85Q14.08 6.08 13.23 6.91Q12.37 7.73 11.2 7.73Q10.03 7.73 9.23 6.93Q8.59 6.29 8.43 5.44Q8.27 4.59 8.59 3.79Q8.8 3.25 9.2 2.83Q9.6 2.4 10.13 2.19Q10.67 1.97 11.2 1.97H11.47L9.65 3.84V4.53L11.52 6.4H12.21L14.03 4.59ZM3.25 6.67H4.75L5.49 7.41L6.13 6.72L5.49 6.03L5.55 4.37L5.33 3.95L2.45 2.03L1.87 2.13L1.07 2.93L0.96 3.57L2.83 6.45ZM2.29 3.04 4.59 4.59V5.71H3.52L2.03 3.36ZM9.39 10.03 10.08 9.33 13.17 12.53Q13.6 12.96 13.6 13.55Q13.6 14.13 13.17 14.56Q12.85 14.88 12.45 14.96Q12.05 15.04 11.63 14.88Q11.36 14.77 11.2 14.56L8.05 11.36L8.75 10.67L11.84 13.87Q11.95 13.97 12.08 14.03Q12.21 14.08 12.35 14.03Q12.48 13.97 12.53 13.89Q12.59 13.81 12.61 13.73Q12.64 13.65 12.64 13.55Q12.64 13.44 12.61 13.36Q12.59 13.28 12.53 13.23Z"/></svg>
<span class="t" style="left:173px;top:693.0px;line-height:28px;font-size:19.8px;color:#cccccc;letter-spacing:0.311px;">ContinuousConfigure — Utility</span>
<svg class="i" style="left:104px;top:727.5px;" width="25" height="25" viewBox="0 0 16 16"><path fill="#cccccc" d="M10.08 8 5.71 3.68 6.35 3.04 10.99 7.73V8.32L6.35 13.01L5.71 12.37Z"/></svg>
<svg class="i" style="left:138.5px;top:726.1px;" width="25" height="25" viewBox="0 0 16 16"><path fill="#cccccc" d="M14.77 3.47 13.97 3.31 11.89 5.39 10.67 4.16 12.75 2.03 12.59 1.23Q11.89 1.01 11.17 1.01Q10.45 1.01 9.76 1.31Q9.07 1.6 8.53 2.13Q8 2.67 7.71 3.39Q7.41 4.11 7.41 4.88Q7.41 5.65 7.68 6.35Q4.59 9.44 1.55 12.59Q1.23 13.01 1.25 13.57Q1.28 14.13 1.71 14.51Q1.92 14.72 2.16 14.85Q2.4 14.99 2.67 14.99Q3.15 14.99 3.52 14.61Q4.64 13.6 6.56 11.63Q8.37 9.87 9.76 8.43Q10.45 8.75 11.2 8.75Q11.95 8.75 12.64 8.45Q13.33 8.16 13.87 7.6Q14.4 7.04 14.69 6.35Q14.99 5.65 14.99 4.91Q14.99 4.16 14.77 3.47ZM2.93 13.92Q2.88 13.97 2.77 13.97H2.67Q2.56 13.97 2.51 13.95Q2.45 13.92 2.37 13.81Q2.29 13.71 2.24 13.55Q2.19 13.39 2.24 13.28Q4.48 10.93 8.21 7.2Q8.37 7.41 8.53 7.6Q8.69 7.79 8.91 7.95Q5.01 11.95 2.93 13.92ZM14.03 4.85Q14.08 6.08 13.23 6.91Q12.37 7.73 11.2 7.73Q10.03 7.73 9.23 6.93Q8.59 6.29 8.43 5.44Q8.27 4.59 8.59 3.79Q8.8 3.25 9.2 2.83Q9.6 2.4 10.13 2.19Q10.67 1.97 11.2 1.97H11.47L9.65 3.84V4.53L11.52 6.4H12.21L14.03 4.59ZM3.25 6.67H4.75L5.49 7.41L6.13 6.72L5.49 6.03L5.55 4.37L5.33 3.95L2.45 2.03L1.87 2.13L1.07 2.93L0.96 3.57L2.83 6.45ZM2.29 3.04 4.59 4.59V5.71H3.52L2.03 3.36ZM9.39 10.03 10.08 9.33 13.17 12.53Q13.6 12.96 13.6 13.55Q13.6 14.13 13.17 14.56Q12.85 14.88 12.45 14.96Q12.05 15.04 11.63 14.88Q11.36 14.77 11.2 14.56L8.05 11.36L8.75 10.67L11.84 13.87Q11.95 13.97 12.08 14.03Q12.21 14.08 12.35 14.03Q12.48 13.97 12.53 13.89Q12.59 13.81 12.61 13.73Q12.64 13.65 12.64 13.55Q12.64 13.44 12.61 13.36Q12.59 13.28 12.53 13.23Z"/></svg>
<span class="t" style="left:173px;top:727.0px;line-height:28px;font-size:19.8px;color:#cccccc;letter-spacing:0.179px;">ContinuousCoverage — Utility</span>
<svg class="i" style="left:104px;top:761.5px;" width="25" height="25" viewBox="0 0 16 16"><path fill="#cccccc" d="M10.08 8 5.71 3.68 6.35 3.04 10.99 7.73V8.32L6.35 13.01L5.71 12.37Z"/></svg>
<svg class="i" style="left:138.5px;top:760.1px;" width="25" height="25" viewBox="0 0 16 16"><path fill="#cccccc" d="M14.77 3.47 13.97 3.31 11.89 5.39 10.67 4.16 12.75 2.03 12.59 1.23Q11.89 1.01 11.17 1.01Q10.45 1.01 9.76 1.31Q9.07 1.6 8.53 2.13Q8 2.67 7.71 3.39Q7.41 4.11 7.41 4.88Q7.41 5.65 7.68 6.35Q4.59 9.44 1.55 12.59Q1.23 13.01 1.25 13.57Q1.28 14.13 1.71 14.51Q1.92 14.72 2.16 14.85Q2.4 14.99 2.67 14.99Q3.15 14.99 3.52 14.61Q4.64 13.6 6.56 11.63Q8.37 9.87 9.76 8.43Q10.45 8.75 11.2 8.75Q11.95 8.75 12.64 8.45Q13.33 8.16 13.87 7.6Q14.4 7.04 14.69 6.35Q14.99 5.65 14.99 4.91Q14.99 4.16 14.77 3.47ZM2.93 13.92Q2.88 13.97 2.77 13.97H2.67Q2.56 13.97 2.51 13.95Q2.45 13.92 2.37 13.81Q2.29 13.71 2.24 13.55Q2.19 13.39 2.24 13.28Q4.48 10.93 8.21 7.2Q8.37 7.41 8.53 7.6Q8.69 7.79 8.91 7.95Q5.01 11.95 2.93 13.92ZM14.03 4.85Q14.08 6.08 13.23 6.91Q12.37 7.73 11.2 7.73Q10.03 7.73 9.23 6.93Q8.59 6.29 8.43 5.44Q8.27 4.59 8.59 3.79Q8.8 3.25 9.2 2.83Q9.6 2.4 10.13 2.19Q10.67 1.97 11.2 1.97H11.47L9.65 3.84V4.53L11.52 6.4H12.21L14.03 4.59ZM3.25 6.67H4.75L5.49 7.41L6.13 6.72L5.49 6.03L5.55 4.37L5.33 3.95L2.45 2.03L1.87 2.13L1.07 2.93L0.96 3.57L2.83 6.45ZM2.29 3.04 4.59 4.59V5.71H3.52L2.03 3.36ZM9.39 10.03 10.08 9.33 13.17 12.53Q13.6 12.96 13.6 13.55Q13.6 14.13 13.17 14.56Q12.85 14.88 12.45 14.96Q12.05 15.04 11.63 14.88Q11.36 14.77 11.2 14.56L8.05 11.36L8.75 10.67L11.84 13.87Q11.95 13.97 12.08 14.03Q12.21 14.08 12.35 14.03Q12.48 13.97 12.53 13.89Q12.59 13.81 12.61 13.73Q12.64 13.65 12.64 13.55Q12.64 13.44 12.61 13.36Q12.59 13.28 12.53 13.23Z"/></svg>
<span class="t" style="left:173px;top:761.0px;line-height:28px;font-size:19.8px;color:#cccccc;letter-spacing:0.242px;">ContinuousMemCheck — Utility</span>
<svg class="i" style="left:104px;top:796.5px;" width="25" height="25" viewBox="0 0 16 16"><path fill="#cccccc" d="M10.08 8 5.71 3.68 6.35 3.04 10.99 7.73V8.32L6.35 13.01L5.71 12.37Z"/></svg>
<svg class="i" style="left:138.5px;top:795.1px;" width="25" height="25" viewBox="0 0 16 16"><path fill="#cccccc" d="M14.77 3.47 13.97 3.31 11.89 5.39 10.67 4.16 12.75 2.03 12.59 1.23Q11.89 1.01 11.17 1.01Q10.45 1.01 9.76 1.31Q9.07 1.6 8.53 2.13Q8 2.67 7.71 3.39Q7.41 4.11 7.41 4.88Q7.41 5.65 7.68 6.35Q4.59 9.44 1.55 12.59Q1.23 13.01 1.25 13.57Q1.28 14.13 1.71 14.51Q1.92 14.72 2.16 14.85Q2.4 14.99 2.67 14.99Q3.15 14.99 3.52 14.61Q4.64 13.6 6.56 11.63Q8.37 9.87 9.76 8.43Q10.45 8.75 11.2 8.75Q11.95 8.75 12.64 8.45Q13.33 8.16 13.87 7.6Q14.4 7.04 14.69 6.35Q14.99 5.65 14.99 4.91Q14.99 4.16 14.77 3.47ZM2.93 13.92Q2.88 13.97 2.77 13.97H2.67Q2.56 13.97 2.51 13.95Q2.45 13.92 2.37 13.81Q2.29 13.71 2.24 13.55Q2.19 13.39 2.24 13.28Q4.48 10.93 8.21 7.2Q8.37 7.41 8.53 7.6Q8.69 7.79 8.91 7.95Q5.01 11.95 2.93 13.92ZM14.03 4.85Q14.08 6.08 13.23 6.91Q12.37 7.73 11.2 7.73Q10.03 7.73 9.23 6.93Q8.59 6.29 8.43 5.44Q8.27 4.59 8.59 3.79Q8.8 3.25 9.2 2.83Q9.6 2.4 10.13 2.19Q10.67 1.97 11.2 1.97H11.47L9.65 3.84V4.53L11.52 6.4H12.21L14.03 4.59ZM3.25 6.67H4.75L5.49 7.41L6.13 6.72L5.49 6.03L5.55 4.37L5.33 3.95L2.45 2.03L1.87 2.13L1.07 2.93L0.96 3.57L2.83 6.45ZM2.29 3.04 4.59 4.59V5.71H3.52L2.03 3.36ZM9.39 10.03 10.08 9.33 13.17 12.53Q13.6 12.96 13.6 13.55Q13.6 14.13 13.17 14.56Q12.85 14.88 12.45 14.96Q12.05 15.04 11.63 14.88Q11.36 14.77 11.2 14.56L8.05 11.36L8.75 10.67L11.84 13.87Q11.95 13.97 12.08 14.03Q12.21 14.08 12.35 14.03Q12.48 13.97 12.53 13.89Q12.59 13.81 12.61 13.73Q12.64 13.65 12.64 13.55Q12.64 13.44 12.61 13.36Q12.59 13.28 12.53 13.23Z"/></svg>
<span class="t" style="left:173px;top:796.0px;line-height:28px;font-size:19.8px;color:#cccccc;letter-spacing:0.241px;">ContinuousStart — Utility</span>
<svg class="i" style="left:104px;top:830.5px;" width="25" height="25" viewBox="0 0 16 16"><path fill="#cccccc" d="M10.08 8 5.71 3.68 6.35 3.04 10.99 7.73V8.32L6.35 13.01L5.71 12.37Z"/></svg>
<svg class="i" style="left:138.5px;top:829.1px;" width="25" height="25" viewBox="0 0 16 16"><path fill="#cccccc" d="M14.77 3.47 13.97 3.31 11.89 5.39 10.67 4.16 12.75 2.03 12.59 1.23Q11.89 1.01 11.17 1.01Q10.45 1.01 9.76 1.31Q9.07 1.6 8.53 2.13Q8 2.67 7.71 3.39Q7.41 4.11 7.41 4.88Q7.41 5.65 7.68 6.35Q4.59 9.44 1.55 12.59Q1.23 13.01 1.25 13.57Q1.28 14.13 1.71 14.51Q1.92 14.72 2.16 14.85Q2.4 14.99 2.67 14.99Q3.15 14.99 3.52 14.61Q4.64 13.6 6.56 11.63Q8.37 9.87 9.76 8.43Q10.45 8.75 11.2 8.75Q11.95 8.75 12.64 8.45Q13.33 8.16 13.87 7.6Q14.4 7.04 14.69 6.35Q14.99 5.65 14.99 4.91Q14.99 4.16 14.77 3.47ZM2.93 13.92Q2.88 13.97 2.77 13.97H2.67Q2.56 13.97 2.51 13.95Q2.45 13.92 2.37 13.81Q2.29 13.71 2.24 13.55Q2.19 13.39 2.24 13.28Q4.48 10.93 8.21 7.2Q8.37 7.41 8.53 7.6Q8.69 7.79 8.91 7.95Q5.01 11.95 2.93 13.92ZM14.03 4.85Q14.08 6.08 13.23 6.91Q12.37 7.73 11.2 7.73Q10.03 7.73 9.23 6.93Q8.59 6.29 8.43 5.44Q8.27 4.59 8.59 3.79Q8.8 3.25 9.2 2.83Q9.6 2.4 10.13 2.19Q10.67 1.97 11.2 1.97H11.47L9.65 3.84V4.53L11.52 6.4H12.21L14.03 4.59ZM3.25 6.67H4.75L5.49 7.41L6.13 6.72L5.49 6.03L5.55 4.37L5.33 3.95L2.45 2.03L1.87 2.13L1.07 2.93L0.96 3.57L2.83 6.45ZM2.29 3.04 4.59 4.59V5.71H3.52L2.03 3.36ZM9.39 10.03 10.08 9.33 13.17 12.53Q13.6 12.96 13.6 13.55Q13.6 14.13 13.17 14.56Q12.85 14.88 12.45 14.96Q12.05 15.04 11.63 14.88Q11.36 14.77 11.2 14.56L8.05 11.36L8.75 10.67L11.84 13.87Q11.95 13.97 12.08 14.03Q12.21 14.08 12.35 14.03Q12.48 13.97 12.53 13.89Q12.59 13.81 12.61 13.73Q12.64 13.65 12.64 13.55Q12.64 13.44 12.61 13.36Q12.59 13.28 12.53 13.23Z"/></svg>
<span class="t" style="left:173px;top:830.0px;line-height:28px;font-size:19.8px;color:#cccccc;letter-spacing:0.317px;">ContinuousSubmit — Utility</span>
<svg class="i" style="left:104px;top:864.5px;" width="25" height="25" viewBox="0 0 16 16"><path fill="#cccccc" d="M10.08 8 5.71 3.68 6.35 3.04 10.99 7.73V8.32L6.35 13.01L5.71 12.37Z"/></svg>
<svg class="i" style="left:138.5px;top:863.1px;" width="25" height="25" viewBox="0 0 16 16"><path fill="#cccccc" d="M14.77 3.47 13.97 3.31 11.89 5.39 10.67 4.16 12.75 2.03 12.59 1.23Q11.89 1.01 11.17 1.01Q10.45 1.01 9.76 1.31Q9.07 1.6 8.53 2.13Q8 2.67 7.71 3.39Q7.41 4.11 7.41 4.88Q7.41 5.65 7.68 6.35Q4.59 9.44 1.55 12.59Q1.23 13.01 1.25 13.57Q1.28 14.13 1.71 14.51Q1.92 14.72 2.16 14.85Q2.4 14.99 2.67 14.99Q3.15 14.99 3.52 14.61Q4.64 13.6 6.56 11.63Q8.37 9.87 9.76 8.43Q10.45 8.75 11.2 8.75Q11.95 8.75 12.64 8.45Q13.33 8.16 13.87 7.6Q14.4 7.04 14.69 6.35Q14.99 5.65 14.99 4.91Q14.99 4.16 14.77 3.47ZM2.93 13.92Q2.88 13.97 2.77 13.97H2.67Q2.56 13.97 2.51 13.95Q2.45 13.92 2.37 13.81Q2.29 13.71 2.24 13.55Q2.19 13.39 2.24 13.28Q4.48 10.93 8.21 7.2Q8.37 7.41 8.53 7.6Q8.69 7.79 8.91 7.95Q5.01 11.95 2.93 13.92ZM14.03 4.85Q14.08 6.08 13.23 6.91Q12.37 7.73 11.2 7.73Q10.03 7.73 9.23 6.93Q8.59 6.29 8.43 5.44Q8.27 4.59 8.59 3.79Q8.8 3.25 9.2 2.83Q9.6 2.4 10.13 2.19Q10.67 1.97 11.2 1.97H11.47L9.65 3.84V4.53L11.52 6.4H12.21L14.03 4.59ZM3.25 6.67H4.75L5.49 7.41L6.13 6.72L5.49 6.03L5.55 4.37L5.33 3.95L2.45 2.03L1.87 2.13L1.07 2.93L0.96 3.57L2.83 6.45ZM2.29 3.04 4.59 4.59V5.71H3.52L2.03 3.36ZM9.39 10.03 10.08 9.33 13.17 12.53Q13.6 12.96 13.6 13.55Q13.6 14.13 13.17 14.56Q12.85 14.88 12.45 14.96Q12.05 15.04 11.63 14.88Q11.36 14.77 11.2 14.56L8.05 11.36L8.75 10.67L11.84 13.87Q11.95 13.97 12.08 14.03Q12.21 14.08 12.35 14.03Q12.48 13.97 12.53 13.89Q12.59 13.81 12.61 13.73Q12.64 13.65 12.64 13.55Q12.64 13.44 12.61 13.36Q12.59 13.28 12.53 13.23Z"/></svg>
<span class="t" style="left:173px;top:864.0px;line-height:28px;font-size:19.8px;color:#cccccc;letter-spacing:0.188px;">ContinuousTest — Utility</span>
<svg class="i" style="left:104px;top:898.5px;" width="25" height="25" viewBox="0 0 16 16"><path fill="#cccccc" d="M10.08 8 5.71 3.68 6.35 3.04 10.99 7.73V8.32L6.35 13.01L5.71 12.37Z"/></svg>
<svg class="i" style="left:138.5px;top:897.1px;" width="25" height="25" viewBox="0 0 16 16"><path fill="#cccccc" d="M14.77 3.47 13.97 3.31 11.89 5.39 10.67 4.16 12.75 2.03 12.59 1.23Q11.89 1.01 11.17 1.01Q10.45 1.01 9.76 1.31Q9.07 1.6 8.53 2.13Q8 2.67 7.71 3.39Q7.41 4.11 7.41 4.88Q7.41 5.65 7.68 6.35Q4.59 9.44 1.55 12.59Q1.23 13.01 1.25 13.57Q1.28 14.13 1.71 14.51Q1.92 14.72 2.16 14.85Q2.4 14.99 2.67 14.99Q3.15 14.99 3.52 14.61Q4.64 13.6 6.56 11.63Q8.37 9.87 9.76 8.43Q10.45 8.75 11.2 8.75Q11.95 8.75 12.64 8.45Q13.33 8.16 13.87 7.6Q14.4 7.04 14.69 6.35Q14.99 5.65 14.99 4.91Q14.99 4.16 14.77 3.47ZM2.93 13.92Q2.88 13.97 2.77 13.97H2.67Q2.56 13.97 2.51 13.95Q2.45 13.92 2.37 13.81Q2.29 13.71 2.24 13.55Q2.19 13.39 2.24 13.28Q4.48 10.93 8.21 7.2Q8.37 7.41 8.53 7.6Q8.69 7.79 8.91 7.95Q5.01 11.95 2.93 13.92ZM14.03 4.85Q14.08 6.08 13.23 6.91Q12.37 7.73 11.2 7.73Q10.03 7.73 9.23 6.93Q8.59 6.29 8.43 5.44Q8.27 4.59 8.59 3.79Q8.8 3.25 9.2 2.83Q9.6 2.4 10.13 2.19Q10.67 1.97 11.2 1.97H11.47L9.65 3.84V4.53L11.52 6.4H12.21L14.03 4.59ZM3.25 6.67H4.75L5.49 7.41L6.13 6.72L5.49 6.03L5.55 4.37L5.33 3.95L2.45 2.03L1.87 2.13L1.07 2.93L0.96 3.57L2.83 6.45ZM2.29 3.04 4.59 4.59V5.71H3.52L2.03 3.36ZM9.39 10.03 10.08 9.33 13.17 12.53Q13.6 12.96 13.6 13.55Q13.6 14.13 13.17 14.56Q12.85 14.88 12.45 14.96Q12.05 15.04 11.63 14.88Q11.36 14.77 11.2 14.56L8.05 11.36L8.75 10.67L11.84 13.87Q11.95 13.97 12.08 14.03Q12.21 14.08 12.35 14.03Q12.48 13.97 12.53 13.89Q12.59 13.81 12.61 13.73Q12.64 13.65 12.64 13.55Q12.64 13.44 12.61 13.36Q12.59 13.28 12.53 13.23Z"/></svg>
<span class="t" style="left:173px;top:898.0px;line-height:28px;font-size:19.8px;color:#cccccc;letter-spacing:0.308px;">ContinuousUpdate — Utility</span>
<div class="b" style="left:490px;top:54px;width:186px;height:53px;background:#181818"></div>
<div class="b" style="left:676px;top:54px;width:1px;height:54px;background:#2b2b2b"></div>
<div class="b" style="left:677px;top:54px;width:220px;height:54px;background:#1f1f1f"></div>
<div class="b" style="left:677px;top:54px;width:220px;height:2px;background:#0078d4"></div>
<div class="b" style="left:897px;top:54px;width:1px;height:54px;background:#2b2b2b"></div>
<svg class="i" style="left:512px;top:71px" width="20" height="20" viewBox="0 0 20 20"><path d="M12.16 5.08 A5.7 5.7 0 1 0 12.16 13.82" fill="none" stroke="#519aba" stroke-width="4"/><path d="M7.5 9.3 H12.3 M9.9 6.9 V11.7 M13.4 9.3 H18.2 M15.8 6.9 V11.7" stroke="#519aba" stroke-width="1.3" fill="none"/></svg>
<span class="t" style="left:540.5px;top:67.5px;line-height:28px;font-size:19.8px;color:#9d9d9d;letter-spacing:-0.033px;">main.cpp</span>
<span class="t" style="left:697px;top:64.6px;line-height:32px;font-size:22.7px;color:#519aba;font-weight:700;transform:scaleX(1.05);transform-origin:0 50%;">M</span>
<span class="t" style="left:727px;top:67.5px;line-height:28px;font-size:19.8px;color:#ffffff;letter-spacing:-0.230px;">CMakeLists.txt</span>
<svg class="i" style="left:863px;top:67.7px;" width="25" height="25" viewBox="0 0 16 16"><path fill="#ffffff" d="M8 8.69 11.63 12.37 12.37 11.63 8.69 8 12.37 4.37 11.63 3.63 8 7.31 4.37 3.63 3.63 4.37 7.31 8 3.63 11.63 4.37 12.37Z"/></svg>
<svg class="i" style="left:1191px;top:67.5px;" width="25" height="25" viewBox="0 0 16 16"><path fill="#cccccc" d="M14.03 1.01H2.99L2.03 1.97V13.01L2.99 13.97H14.03L14.99 13.01V1.97ZM8 13.01H2.99V1.97H8ZM14.03 13.01H9.01V1.97H14.03Z"/></svg>
<svg class="i" style="left:1232.5px;top:67.5px;" width="25" height="25" viewBox="0 0 16 16"><path fill="#cccccc" d="M4 8Q4 8.43 3.71 8.72Q3.41 9.01 2.99 9.01Q2.56 9.01 2.29 8.72Q2.03 8.43 2.03 8Q2.03 7.57 2.29 7.28Q2.56 6.99 2.99 6.99Q3.41 6.99 3.71 7.28Q4 7.57 4 8ZM9.01 8Q9.01 8.43 8.72 8.72Q8.43 9.01 8 9.01Q7.57 9.01 7.28 8.72Q6.99 8.43 6.99 8Q6.99 7.57 7.28 7.28Q7.57 6.99 8 6.99Q8.43 6.99 8.72 7.28Q9.01 7.57 9.01 8ZM14.03 8Q14.03 8.43 13.73 8.72Q13.44 9.01 13.01 9.01Q12.59 9.01 12.29 8.72Q12 8.43 12 8Q12 7.57 12.29 7.28Q12.59 6.99 13.01 6.99Q13.44 6.99 13.73 7.28Q14.03 7.57 14.03 8Z"/></svg>
<span class="t" style="left:520px;top:108.9px;line-height:32px;font-size:22.7px;color:#519aba;font-weight:700;transform:scaleX(1.05);transform-origin:0 50%;">M</span>
<span class="t" style="left:549.5px;top:112.5px;line-height:28px;font-size:19.8px;color:#a9a9a9;letter-spacing:-0.230px;">CMakeLists.txt</span>
<div class="b" style="left:599px;top:143.1px;width:600px;height:29.7px;border-top:2.8px solid #282828;border-bottom:2.8px solid #282828;border-left:2.8px solid #282828"></div>
<div class="c" style="left:545.43px;top:145.00px;line-height:30px;font-size:24.5px;transform:scaleX(0.8890)"><span style="color:#cccccc">1</span></div>
<div class="c" style="left:599px;top:145.00px;line-height:30px;font-size:24.5px;transform:scaleX(0.8890)"><span style="color:#569cd6">cmake_minimum_required</span><span style="color:#ffd700">(</span><span style="color:#d4d4d4">VERSION 3.0.0</span><span style="color:#ffd700">)</span></div>
<div class="c" style="left:545.43px;top:174.55px;line-height:30px;font-size:24.5px;transform:scaleX(0.8890)"><span style="color:#6e7681">2</span></div>
<div class="c" style="left:599px;top:174.55px;line-height:30px;font-size:24.5px;transform:scaleX(0.8890)"><span style="color:#569cd6">project</span><span style="color:#ffd700">(</span><span style="color:#d4d4d4">demo1 VERSION 0.1.0 LANGUAGES C CXX</span><span style="color:#ffd700">)</span></div>
<div class="c" style="left:545.43px;top:204.10px;line-height:30px;font-size:24.5px;transform:scaleX(0.8890)"><span style="color:#6e7681">3</span></div>
<div class="c" style="left:545.43px;top:233.65px;line-height:30px;font-size:24.5px;transform:scaleX(0.8890)"><span style="color:#6e7681">4</span></div>
<div class="c" style="left:599px;top:233.65px;line-height:30px;font-size:24.5px;transform:scaleX(0.8890)"><span style="color:#569cd6">include</span><span style="color:#ffd700">(</span><span style="color:#d4d4d4">CTest</span><span style="color:#ffd700">)</span></div>
<div class="c" style="left:545.43px;top:263.20px;line-height:30px;font-size:24.5px;transform:scaleX(0.8890)"><span style="color:#6e7681">5</span></div>
<div class="c" style="left:599px;top:263.20px;line-height:30px;font-size:24.5px;transform:scaleX(0.8890)"><span style="color:#569cd6">enable_testing</span><span style="color:#ffd700">()</span></div>
<div class="c" style="left:545.43px;top:292.75px;line-height:30px;font-size:24.5px;transform:scaleX(0.8890)"><span style="color:#6e7681">6</span></div>
<div class="c" style="left:545.43px;top:322.30px;line-height:30px;font-size:24.5px;transform:scaleX(0.8890)"><span style="color:#6e7681">7</span></div>
<div class="c" style="left:599px;top:322.30px;line-height:30px;font-size:24.5px;transform:scaleX(0.8890)"><span style="color:#569cd6">add_executable</span><span style="color:#ffd700">(</span><span style="color:#d4d4d4">demo1 main.cpp</span><span style="color:#ffd700">)</span></div>
<div class="c" style="left:545.43px;top:351.85px;line-height:30px;font-size:24.5px;transform:scaleX(0.8890)"><span style="color:#6e7681">8</span></div>
<div class="c" style="left:545.43px;top:381.40px;line-height:30px;font-size:24.5px;transform:scaleX(0.8890)"><span style="color:#6e7681">9</span></div>
<div class="c" style="left:599px;top:381.40px;line-height:30px;font-size:24.5px;transform:scaleX(0.8890)"><span style="color:#569cd6">set</span><span style="color:#ffd700">(</span><span style="color:#d4d4d4">CPACK_PROJECT_NAME </span><span style="color:#569cd6">$</span><span style="color:#da70d6">{</span><span style="color:#569cd6">PROJECT_NAME</span><span style="color:#da70d6">}</span><span style="color:#ffd700">)</span></div>
<div class="c" style="left:532.36px;top:410.95px;line-height:30px;font-size:24.5px;transform:scaleX(0.8890)"><span style="color:#6e7681">10</span></div>
<div class="c" style="left:599px;top:410.95px;line-height:30px;font-size:24.5px;transform:scaleX(0.8890)"><span style="color:#569cd6">set</span><span style="color:#ffd700">(</span><span style="color:#d4d4d4">CPACK_PROJECT_VERSION </span><span style="color:#569cd6">$</span><span style="color:#da70d6">{</span><span style="color:#569cd6">PROJECT_VERSION</span><span style="color:#da70d6">}</span><span style="color:#ffd700">)</span></div>
<div class="c" style="left:532.36px;top:440.50px;line-height:30px;font-size:24.5px;transform:scaleX(0.8890)"><span style="color:#6e7681">11</span></div>
<div class="c" style="left:599px;top:440.50px;line-height:30px;font-size:24.5px;transform:scaleX(0.8890)"><span style="color:#569cd6">include</span><span style="color:#ffd700">(</span><span style="color:#d4d4d4">CPack</span><span style="color:#ffd700">)</span></div>
<div class="c" style="left:532.36px;top:470.05px;line-height:30px;font-size:24.5px;transform:scaleX(0.8890)"><span style="color:#6e7681">12</span></div>
<div class="b" style="left:1189px;top:143px;width:10px;height:466px;background:linear-gradient(90deg,rgba(0,0,0,0),rgba(0,0,0,.2))"></div>
<div class="b" style="left:1257.6px;top:143px;width:1.6px;height:29.7px;background:#2d2d2d"></div>
<svg class="i" style="left:1207px;top:143.3px" width="50" height="26" viewBox="0 0 50 26" opacity=".75"><rect x="0.0" y="0.00" width="22.0" height="1.4" fill="#3f78a8"/><rect x="22.0" y="0.00" width="1.0" height="1.4" fill="#8a8a70"/><rect x="23.0" y="0.00" width="7.0" height="1.4" fill="#9a9a9a"/><rect x="31.0" y="0.00" width="5.0" height="1.4" fill="#9a9a9a"/><rect x="36.0" y="0.00" width="1.0" height="1.4" fill="#8a8a70"/><rect x="0.0" y="2.04" width="7.0" height="1.4" fill="#3f78a8"/><rect x="7.0" y="2.04" width="1.0" height="1.4" fill="#8a8a70"/><rect x="8.0" y="2.04" width="5.0" height="1.4" fill="#9a9a9a"/><rect x="14.0" y="2.04" width="7.0" height="1.4" fill="#9a9a9a"/><rect x="22.0" y="2.04" width="5.0" height="1.4" fill="#9a9a9a"/><rect x="28.0" y="2.04" width="9.0" height="1.4" fill="#9a9a9a"/><rect x="38.0" y="2.04" width="1.0" height="1.4" fill="#9a9a9a"/><rect x="40.0" y="2.04" width="3.0" height="1.4" fill="#9a9a9a"/><rect x="43.0" y="2.04" width="1.0" height="1.4" fill="#8a8a70"/><rect x="0.0" y="6.12" width="7.0" height="1.4" fill="#3f78a8"/><rect x="7.0" y="6.12" width="1.0" height="1.4" fill="#8a8a70"/><rect x="8.0" y="6.12" width="5.0" height="1.4" fill="#9a9a9a"/><rect x="13.0" y="6.12" width="1.0" height="1.4" fill="#8a8a70"/><rect x="0.0" y="8.16" width="14.0" height="1.4" fill="#3f78a8"/><rect x="14.0" y="8.16" width="2.0" height="1.4" fill="#8a8a70"/><rect x="0.0" y="12.24" width="14.0" height="1.4" fill="#3f78a8"/><rect x="14.0" y="12.24" width="1.0" height="1.4" fill="#8a8a70"/><rect x="15.0" y="12.24" width="5.0" height="1.4" fill="#9a9a9a"/><rect x="21.0" y="12.24" width="8.0" height="1.4" fill="#9a9a9a"/><rect x="29.0" y="12.24" width="1.0" height="1.4" fill="#8a8a70"/><rect x="0.0" y="16.32" width="3.0" height="1.4" fill="#3f78a8"/><rect x="3.0" y="16.32" width="1.0" height="1.4" fill="#8a8a70"/><rect x="4.0" y="16.32" width="18.0" height="1.4" fill="#9a9a9a"/><rect x="23.0" y="16.32" width="1.0" height="1.4" fill="#3f78a8"/><rect x="24.0" y="16.32" width="1.0" height="1.4" fill="#8a4a88"/><rect x="25.0" y="16.32" width="12.0" height="1.4" fill="#3f78a8"/><rect x="37.0" y="16.32" width="1.0" height="1.4" fill="#8a4a88"/><rect x="38.0" y="16.32" width="1.0" height="1.4" fill="#8a8a70"/><rect x="0.0" y="18.36" width="3.0" height="1.4" fill="#3f78a8"/><rect x="3.0" y="18.36" width="1.0" height="1.4" fill="#8a8a70"/><rect x="4.0" y="18.36" width="21.0" height="1.4" fill="#9a9a9a"/><rect x="26.0" y="18.36" width="1.0" height="1.4" fill="#3f78a8"/><rect x="27.0" y="18.36" width="1.0" height="1.4" fill="#8a4a88"/><rect x="28.0" y="18.36" width="15.0" height="1.4" fill="#3f78a8"/><rect x="43.0" y="18.36" width="1.0" height="1.4" fill="#8a4a88"/><rect x="44.0" y="18.36" width="1.0" height="1.4" fill="#8a8a70"/><rect x="0.0" y="20.40" width="7.0" height="1.4" fill="#3f78a8"/><rect x="7.0" y="20.40" width="1.0" height="1.4" fill="#8a8a70"/><rect x="8.0" y="20.40" width="5.0" height="1.4" fill="#9a9a9a"/><rect x="13.0" y="20.40" width="1.0" height="1.4" fill="#8a8a70"/></svg>
<span class="t" style="left:522px;top:625.5px;line-height:23px;font-size:16.6px;color:#9d9d9d;letter-spacing:-1.277px;">PROBLEMS</span>
<span class="t" style="left:642px;top:625.5px;line-height:23px;font-size:16.6px;color:#e7e7e7;letter-spacing:-0.703px;">OUTPUT</span>
<div class="b" style="left:639px;top:655.5px;width:70px;height:1.6px;background:#0078d4"></div>
<svg class="i" style="left:734.8px;top:622.4px;" width="27" height="27" viewBox="0 0 16 16"><path fill="#cccccc" d="M4 8Q4 8.43 3.71 8.72Q3.41 9.01 2.99 9.01Q2.56 9.01 2.29 8.72Q2.03 8.43 2.03 8Q2.03 7.57 2.29 7.28Q2.56 6.99 2.99 6.99Q3.41 6.99 3.71 7.28Q4 7.57 4 8ZM9.01 8Q9.01 8.43 8.72 8.72Q8.43 9.01 8 9.01Q7.57 9.01 7.28 8.72Q6.99 8.43 6.99 8Q6.99 7.57 7.28 7.28Q7.57 6.99 8 6.99Q8.43 6.99 8.72 7.28Q9.01 7.57 9.01 8ZM14.03 8Q14.03 8.43 13.73 8.72Q13.44 9.01 13.01 9.01Q12.59 9.01 12.29 8.72Q12 8.43 12 8Q12 7.57 12.29 7.28Q12.59 6.99 13.01 6.99Q13.44 6.99 13.73 7.28Q14.03 7.57 14.03 8Z"/></svg>
<div class="b" style="left:795.4px;top:618.7px;width:264.6px;height:35.2px;background:#313131;border:1px solid #3c3c3c;border-radius:4px"></div>
<span class="t" style="left:808px;top:623.6px;line-height:28px;font-size:19.8px;color:#cccccc;letter-spacing:0.442px;">CMake/Build</span>
<svg class="i" style="left:1024.5px;top:623px;" width="25" height="25" viewBox="0 0 16 16"><path fill="#cccccc" d="M8 10.08 12.32 5.71 12.96 6.35 8.27 10.99H7.68L2.99 6.35L3.63 5.71Z"/></svg>
<svg class="i" style="left:1070px;top:622.5px;" width="25" height="25" viewBox="0 0 16 16"><path fill="#cccccc" d="M10.03 12.59 10.72 13.28 12.32 11.68 13.92 13.28 14.72 12.59 13.01 10.99 14.72 9.39 13.92 8.59 12.32 10.29 10.72 8.59 10.03 9.39 11.63 10.99ZM1.01 4H14.99V2.99H1.01ZM1.01 6.99H14.99V5.97H1.01ZM9.01 9.49V9.01H1.01V9.97H9.01ZM9.01 13.01V12H1.01V13.01Z"/></svg>
<svg class="i" style="left:1111.5px;top:622.5px;" width="25" height="25" viewBox="0 0 16 16"><path fill="#cccccc" d="M5.01 6.99V5.01Q5.01 3.89 5.71 3.07Q6.4 2.24 7.49 2.05Q8.59 1.87 9.52 2.43Q10.45 2.99 10.83 4H11.89Q11.47 2.56 10.24 1.71Q9.01 0.85 7.52 1.04Q6.03 1.23 5.01 2.35Q4 3.47 4 5.01V6.99H2.99L2.03 8V13.97L2.99 14.99H13.01L14.03 13.97V8L13.01 6.99ZM10.99 8H13.01V13.97H2.99V8Z"/></svg>
<svg class="i" style="left:1152px;top:622.5px;" width="25" height="25" viewBox="0 0 16 16"><path fill="#5f5f5f" d="M6.03 5.92 8.05 3.84V3.15L5.92 1.01L5.23 1.71L6.51 2.99H3.52Q2.45 2.99 1.73 3.73Q1.01 4.48 1.01 5.52Q1.01 6.56 1.73 7.28Q2.45 8 3.52 8H4V6.99H3.52Q2.88 6.99 2.45 6.56Q2.03 6.13 2 5.49Q1.97 4.85 2.43 4.43Q2.88 4 3.52 4H6.51L5.23 5.28L5.92 5.97ZM10.99 1.97H8.32L7.31 1.01H12L12.69 1.28L15.73 4.27L16 5.01V13.97L14.99 14.99H6.03L5.01 13.97V6.51L6.03 7.36V13.97H14.99V5.97H10.99ZM12 1.97V5.01H14.99Z"/></svg>
<svg class="i" style="left:1191.5px;top:623px;" width="25" height="25" viewBox="0 0 16 16"><path fill="#cccccc" d="M8 5.92 3.68 10.29 3.04 9.65 7.73 5.01H8.32L13.01 9.65L12.37 10.29Z"/></svg>
<svg class="i" style="left:1232.5px;top:623.5px;" width="25" height="25" viewBox="0 0 16 16"><path fill="#cccccc" d="M8 8.69 11.63 12.37 12.37 11.63 8.69 8 12.37 4.37 11.63 3.63 8 7.31 4.37 3.63 3.63 4.37 7.31 8 3.63 11.63 4.37 12.37Z"/></svg>
<div class="b" style="left:490px;top:662px;width:790px;height:6px;background:linear-gradient(180deg,rgba(0,0,0,.45),rgba(0,0,0,0))"></div>
<div class="c" style="left:522px;top:665.00px;line-height:30px;font-size:24.5px;color:#cccccc;transform:scaleX(0.8866)">[cmake] -- Detecting CXX compiler ABI info</div>
<div class="c" style="left:522px;top:694.50px;line-height:30px;font-size:24.5px;color:#cccccc;transform:scaleX(0.8866)">[cmake] -- Detecting CXX compiler ABI info - done</div>
<div class="c" style="left:522px;top:724.00px;line-height:30px;font-size:24.5px;color:#cccccc;transform:scaleX(0.8866)">[cmake] -- Detecting CXX compile features</div>
<div class="c" style="left:522px;top:753.50px;line-height:30px;font-size:24.5px;color:#cccccc;transform:scaleX(0.8866)">[cmake] -- Detecting CXX compile features - done</div>
<div class="c" style="left:522px;top:783.00px;line-height:30px;font-size:24.5px;color:#cccccc;transform:scaleX(0.8866)">[cmake] -- Configuring done</div>
<div class="c" style="left:522px;top:812.50px;line-height:30px;font-size:24.5px;color:#cccccc;transform:scaleX(0.8866)">[cmake] -- Generating done</div>
<div class="c" style="left:522px;top:842.00px;line-height:30px;font-size:24.5px;color:#cccccc;transform:scaleX(0.8866)">[cmake] -- Build files have been written to: <span style="text-decoration:underline;text-decoration-thickness:1.5px;text-underline-offset:5px">/home/lzj/</span></div>
<div class="c" style="left:522px;top:871.50px;line-height:30px;font-size:24.5px;color:#cccccc;transform:scaleX(0.8866)"><span style="text-decoration:underline;text-decoration-thickness:1.5px;text-underline-offset:5px">demo1/build</span></div>
<div class="c" style="left:522px;top:901.00px;line-height:30px;font-size:24.5px;color:#cccccc;transform:scaleX(0.8866)">[main] Configuring project: demo1</div>
<div class="b" style="left:1259px;top:663px;width:1px;height:266px;background:#0e0e0e"></div>
<div class="b" style="left:1260px;top:846px;width:19px;height:30.5px;background:#414141"></div>
<div class="b" style="left:1260px;top:847.6px;width:19px;height:3.4px;background:#878787"></div>
<svg class="i" style="left:15.25px;top:933.15px;" width="22.9" height="22.9" viewBox="0 0 16 16"><path fill="#ffffff" d="M12.91 9.55 8.91 5.6 12.91 1.6 12.27 1.01 8 5.28V5.92L12.27 10.19ZM2.99 5.6 7.09 9.71 2.99 13.76 3.63 14.4 8 9.97V9.39L3.63 5.01Z"/></svg>
<span class="t" style="left:43px;top:934.0px;line-height:26px;font-size:18.6px;color:#ffffff;letter-spacing:-0.312px;">WSL: Ubuntu-20.04</span>
<svg class="i" style="left:228.7px;top:933.5px;" width="22.6" height="22.6" viewBox="0 0 16 16"><path fill="#cccccc" d="M8.59 1.01Q9.76 1.07 10.85 1.6Q11.95 2.13 12.8 2.99Q14.83 5.17 14.83 8.11Q14.83 10.4 13.23 12.48Q12.43 13.44 11.41 14.05Q10.4 14.67 9.23 14.88Q6.67 15.36 4.59 14.19Q3.52 13.6 2.72 12.69Q1.92 11.79 1.49 10.67Q1.07 9.55 0.99 8.32Q0.91 7.09 1.28 5.97Q2.08 3.52 4.11 2.19Q5.07 1.55 6.21 1.23Q7.36 0.91 8.59 1.01ZM9.12 13.92Q11.15 13.44 12.48 11.79Q13.81 9.97 13.71 8Q13.71 6.77 13.25 5.65Q12.8 4.53 12 3.68Q10.45 2.13 8.43 1.97Q7.41 1.92 6.4 2.16Q5.39 2.4 4.59 2.99Q2.88 4.27 2.27 6.35Q1.65 8.43 2.53 10.35Q3.41 12.27 5.23 13.28Q6.08 13.81 7.09 13.97Q8.11 14.13 9.12 13.92ZM7.89 7.52 10.29 5.01 10.99 5.71 8.59 8.21 10.99 10.72 10.29 11.41 7.89 8.91 5.49 11.41 4.8 10.72 7.2 8.21 4.8 5.71 5.49 5.01Z"/></svg>
<span class="t" style="left:257px;top:934.0px;line-height:26px;font-size:18.6px;color:#cccccc;letter-spacing:-0.344px;">0</span>
<svg class="i" style="left:271.2px;top:933.5px;" width="22.6" height="22.6" viewBox="0 0 16 16"><path fill="#cccccc" d="M7.57 1.01H8.43L14.99 13.28L14.56 13.97H1.44L1.01 13.28ZM8 2.29 2.29 13.01H13.71ZM8.64 12V10.99H7.36V12ZM7.36 9.97V5.97H8.64V9.97Z"/></svg>
<span class="t" style="left:298.5px;top:934.0px;line-height:26px;font-size:18.6px;color:#cccccc;letter-spacing:-0.344px;">0</span>
<svg class="i" style="left:333.3px;top:933.5px;" width="22.6" height="22.6" viewBox="0 0 16 16"><path fill="#cccccc" d="M2.99 5.6Q2.99 4.48 3.41 3.47Q3.84 2.45 4.64 1.71L3.89 1.01Q2.99 1.92 2.48 3.09Q1.97 4.27 1.97 5.57Q1.97 6.88 2.48 8.05Q2.99 9.23 3.89 10.13L4.64 9.44Q3.84 8.69 3.41 7.68Q2.99 6.67 2.99 5.6ZM4.05 5.6Q4.05 6.45 4.4 7.28Q4.75 8.11 5.39 8.75L6.08 8.05Q5.6 7.57 5.33 6.93Q5.07 6.29 5.07 5.6Q5.07 4.91 5.33 4.27Q5.6 3.63 6.08 3.15L5.39 2.4Q4.75 3.04 4.4 3.87Q4.05 4.69 4.05 5.6ZM11.73 8.8 10.99 8.05Q11.52 7.57 11.79 6.93Q12.05 6.29 12.05 5.6Q12.05 4.91 11.79 4.27Q11.52 3.63 10.99 3.15L11.73 2.45Q12.32 3.09 12.67 3.92Q13.01 4.75 13.01 5.63Q13.01 6.51 12.67 7.33Q12.32 8.16 11.73 8.8ZM13.07 1.01 12.37 1.71Q13.12 2.45 13.55 3.47Q13.97 4.48 13.97 5.57Q13.97 6.67 13.55 7.68Q13.12 8.69 12.37 9.44L13.07 10.13Q13.97 9.23 14.48 8.05Q14.99 6.88 14.99 5.57Q14.99 4.27 14.48 3.09Q13.97 1.92 13.07 1.01ZM9.97 5.44Q10.03 5.97 9.76 6.4L9.49 6.61L12.91 14.35L12 14.77L11.25 13.01H5.71L4.91 14.77L4 14.35L7.41 6.61Q7.15 6.29 7.04 5.87Q6.93 5.44 7.12 5.01Q7.31 4.59 7.65 4.35Q8 4.11 8.4 4.08Q8.8 4.05 9.15 4.21Q9.49 4.37 9.73 4.69Q9.97 5.01 9.97 5.44ZM8.37 5.07Q8.27 5.12 8.16 5.23Q8.05 5.33 8.03 5.47Q8 5.6 8.05 5.73Q8.11 5.87 8.24 5.95Q8.37 6.03 8.53 6.03Q8.69 6.03 8.85 5.89Q9.01 5.76 9.01 5.57Q9.01 5.39 8.91 5.28Q8.8 5.17 8.67 5.12Q8.53 5.07 8.37 5.07ZM8.64 7.15H8.37L7.47 9.07H9.49ZM10.83 12.05 9.92 10.08H7.04L6.19 12.05Z"/></svg>
<span class="t" style="left:360.5px;top:934.0px;line-height:26px;font-size:18.6px;color:#cccccc;letter-spacing:-0.344px;">0</span>
<svg class="i" style="left:394.3px;top:934.3px;" width="22.6" height="22.6" viewBox="0 0 16 16"><path fill="#cccccc" d="M7.31 9.01 6.4 9.87Q6.19 9.07 5.52 8.53Q4.85 8 4 8Q3.15 8 2.48 8.53Q1.81 9.07 1.6 9.87L0.69 9.01L0 9.71L1.17 10.83L1.01 10.99V12H0V13.01H1.01V13.07Q1.07 13.55 1.28 14.03L0 15.31L0.69 16L1.81 14.88Q2.19 15.41 2.77 15.71Q3.36 16 4 16Q4.64 16 5.23 15.71Q5.81 15.41 6.19 14.88L7.31 16L8 15.31L6.72 13.97Q6.93 13.55 6.99 13.01V12.96H8V12H6.99V10.99L6.88 10.83L8 9.71ZM4 9.01Q4.64 9.01 5.07 9.44Q5.49 9.87 5.49 10.51H2.51Q2.51 9.87 2.93 9.44Q3.36 9.01 4 9.01ZM6.03 13.01Q5.92 13.81 5.36 14.37Q4.8 14.93 4 14.99Q3.2 14.93 2.64 14.37Q2.08 13.81 2.03 13.01V11.52H6.03ZM15.84 6.4V7.25L9.01 11.57V10.4L14.67 6.83L6.03 1.33V7.63Q5.55 7.31 5.01 7.15V0.43L5.76 0Z"/></svg>
<svg class="i" style="left:441.2px;top:934.0px;" width="22.6" height="22.6" viewBox="0 0 16 16"><path fill="#cccccc" d="M9.12 4.37 8.59 1.97H7.41L6.88 4.37L6.19 4.69L4.21 3.41L3.31 4.21L4.59 6.19L4.43 6.88L2.03 7.41V8.59L4.43 9.12L4.69 9.92L3.41 11.89L4.21 12.69L6.19 11.41L6.99 11.68L7.41 13.97H8.59L9.12 11.57L9.92 11.31L11.89 12.59L12.69 11.79L11.41 9.81L11.68 9.01L14.03 8.59V7.41L11.63 6.88L11.31 6.08L12.59 4.11L11.79 3.31L9.81 4.59ZM9.39 1.01 9.92 3.41 12 2.08 14.03 4.11 12.59 6.19 14.99 6.61V9.39L12.59 9.92L14.03 12L12 13.97L9.92 12.59L9.39 14.99H6.61L6.08 12.59L4 13.92L2.03 11.89L3.41 9.81L1.01 9.39V6.61L3.41 6.08L2.08 4L4.11 1.97L6.19 3.41L6.61 1.01ZM10.03 8Q10.03 8.8 9.41 9.39Q8.8 9.97 8 9.97Q7.2 9.97 6.61 9.39Q6.03 8.8 6.03 8Q6.03 7.2 6.61 6.59Q7.2 5.97 8 5.97Q8.8 5.97 9.41 6.59Q10.03 7.2 10.03 8ZM8 9.01Q8.43 9.01 8.72 8.72Q9.01 8.43 9.01 8Q9.01 7.57 8.72 7.28Q8.43 6.99 8 6.99Q7.57 6.99 7.28 7.28Q6.99 7.57 6.99 8Q6.99 8.43 7.28 8.72Q7.57 9.01 8 9.01Z"/></svg>
<span class="t" style="left:469.5px;top:934.0px;line-height:26px;font-size:18.6px;color:#cccccc;letter-spacing:-0.272px;">Build</span>
<svg class="i" style="left:534.3px;top:933.7px;" width="22.6" height="22.6" viewBox="0 0 16 16"><path fill="#cccccc" d="M10.88 4.48V3.89Q10.88 2.72 10.03 1.87Q9.17 1.01 7.97 1.01Q6.77 1.01 5.92 1.87Q5.07 2.72 5.07 3.89V4.48H4.21L2.56 2.83L1.97 3.41L3.57 5.01L3.52 5.07Q3.04 6.45 3.04 7.89V8.53H1.01V9.39H3.15H3.2Q3.41 10.83 4.11 11.95L4.16 12L2.19 13.97L2.77 14.56L4.64 12.69L4.75 12.75Q5.39 13.49 6.21 13.92Q7.04 14.35 7.95 14.35Q8.85 14.35 9.68 13.95Q10.51 13.55 11.15 12.8L11.2 12.75L13.12 14.67L13.71 14.08L11.73 12.05V12Q12.48 10.83 12.75 9.39H14.93V8.53H12.85V7.89Q12.91 6.45 12.37 5.07L12.32 5.01L13.92 3.41L13.33 2.83L11.68 4.48ZM5.87 4.48V3.89Q5.87 3.04 6.48 2.43Q7.09 1.81 7.95 1.81Q8.8 1.81 9.41 2.43Q10.03 3.04 10.03 3.89V4.48ZM11.57 5.33V5.39Q12.05 6.56 12.05 7.89Q12.05 9.12 11.71 10.16Q11.36 11.2 10.77 11.95Q10.19 12.69 9.47 13.09Q8.75 13.49 7.97 13.49Q7.2 13.49 6.45 13.09Q5.71 12.69 5.12 11.95Q4.53 11.2 4.21 10.16Q3.89 9.12 3.89 7.89Q3.89 6.56 4.32 5.39V5.33Z"/></svg>
<svg class="i" style="left:581.0px;top:934.2px;" width="22.6" height="22.6" viewBox="0 0 16 16"><path fill="#cccccc" d="M3.79 1.97 2.99 2.4V14.4L3.79 14.83L12.8 8.85V8ZM4 13.49V3.36L11.63 8.43Z"/></svg>
<span class="t" style="left:825px;top:934.0px;line-height:26px;font-size:18.6px;color:#cccccc;letter-spacing:-0.449px;">Ln 1, Col 1</span>
<span class="t" style="left:936px;top:934.0px;line-height:26px;font-size:18.6px;color:#cccccc;letter-spacing:-0.856px;">Spaces: 4</span>
<span class="t" style="left:1037px;top:934.0px;line-height:26px;font-size:18.6px;color:#cccccc;letter-spacing:-0.938px;">UTF-8</span>
<span class="t" style="left:1111px;top:934.0px;line-height:26px;font-size:18.6px;color:#cccccc;letter-spacing:-2.352px;">LF</span>
<span class="t" style="left:1153px;top:934.0px;line-height:26px;font-size:18.6px;color:#cccccc;letter-spacing:-0.381px;">CMake</span>
<svg class="i" style="left:1234.7px;top:933.9px;" width="22.6" height="22.6" viewBox="0 0 16 16"><path fill="#cccccc" d="M13.39 10.56Q13.01 9.44 13.01 8.21V6.19Q13.01 5.23 12.69 4.35Q12.37 3.47 11.73 2.75Q11.09 2.03 10.27 1.57Q9.44 1.12 8.48 1.01Q7.41 0.91 6.4 1.25Q5.39 1.6 4.61 2.32Q3.84 3.04 3.41 4Q2.99 4.96 2.99 6.03V8.21Q2.99 9.44 2.61 10.56L2.03 12.32L2.45 13.01H5.97Q5.97 13.81 6.56 14.4Q7.15 14.99 7.97 14.99Q8.8 14.99 9.39 14.4Q9.97 13.81 9.97 13.01H13.49L13.97 12.32ZM8.69 13.71Q8.37 14.03 7.97 14.03Q7.57 14.03 7.28 13.73Q6.99 13.44 6.99 13.01H8.96Q9.01 13.44 8.69 13.71ZM3.15 12 3.52 10.88Q4 9.6 4 8.21V6.03Q4 5.17 4.35 4.37Q4.69 3.57 5.31 3.01Q5.92 2.45 6.75 2.19Q7.57 1.92 8.37 2.03Q9.97 2.24 10.99 3.41Q11.47 4 11.73 4.72Q12 5.44 12 6.19V8.21Q12 9.6 12.43 10.93L12.8 12Z"/></svg>
</div></div>
</body></html>
